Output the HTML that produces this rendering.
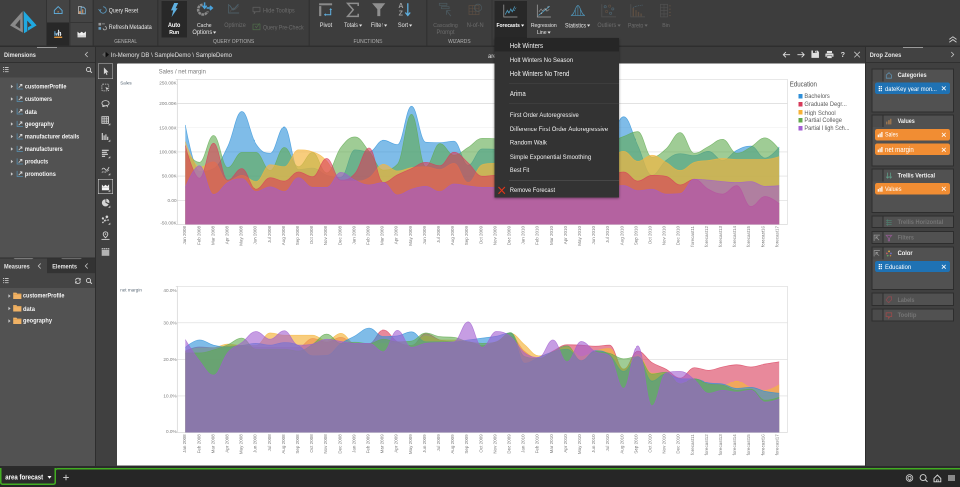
<!DOCTYPE html>
<html><head><meta charset="utf-8"><title>area forecast</title>
<style>
html,body{margin:0;padding:0;background:#3e3e3e;}
body{width:960px;height:487px;overflow:hidden;position:relative;}
#root{will-change:transform;position:absolute;left:0;top:0;width:1920px;height:974px;transform:scale(0.5);transform-origin:0 0;
 font-family:"Liberation Sans",sans-serif;overflow:hidden;background:#3e3e3e;}
#root div,#root svg{position:absolute;box-sizing:border-box;}
#root svg{overflow:visible;}
</style></head>
<body><div id="root">
<div style="left:0px;top:0px;width:1920px;height:91.4px;background:#3d3d3d;"></div>
<div style="left:0px;top:91.4px;width:1920px;height:3px;background:#2e2e2e;"></div>
<div style="left:0px;top:94.4px;width:189.6px;height:30px;background:#424242;"></div>
<div style="left:192.4px;top:94.4px;width:1537.6px;height:31.2px;background:#3c3c3c;"></div>
<div style="left:1732.4px;top:94.4px;width:187.6px;height:30px;background:#424242;"></div>
<div style="left:189.6px;top:91.4px;width:2.8px;height:840.6px;background:#2e2e2e;"></div>
<div style="left:1730px;top:91.4px;width:2.4px;height:840.6px;background:#2e2e2e;"></div>
<div style="left:0px;top:124.4px;width:189.6px;height:2px;background:#303030;"></div>
<div style="left:0px;top:126.4px;width:189.6px;height:28.6px;background:#444444;"></div>
<div style="left:0px;top:155px;width:189.6px;height:359.6px;background:#525252;"></div>
<div style="left:0px;top:514.6px;width:189.6px;height:2.4px;background:#2e2e2e;"></div>
<div style="left:0px;top:517px;width:94.4px;height:30px;background:#444444;"></div>
<div style="left:94.4px;top:517px;width:95.2px;height:29.2px;background:#333333;"></div>
<div style="left:0px;top:547px;width:189.6px;height:29.2px;background:#444444;"></div>
<div style="left:0px;top:576.2px;width:189.6px;height:355.8px;background:#525252;"></div>
<div style="left:192.4px;top:125.6px;width:42px;height:806.4px;background:#404040;"></div>
<div style="left:234.4px;top:126.8px;width:1495.2px;height:804.4px;background:#ffffff;border-radius:2px 0 0 0;"></div>
<div style="left:1732.4px;top:124.4px;width:187.6px;height:807.6px;background:#404040;"></div>
<div style="left:0px;top:932px;width:1920px;height:42px;background:#262626;"></div>
<div style="left:1732.4px;top:124.4px;width:187.6px;height:2px;background:#303030;"></div>
<div style="left:0px;top:0px;width:91.6px;height:91.4px;background:#404040;"></div>
<div style="left:91.6px;top:0px;width:2.4px;height:91.4px;background:#333;"></div>
<div style="left:94px;top:0px;width:44.4px;height:43.6px;background:#444444;"></div>
<div style="left:141px;top:0px;width:44.2px;height:43.6px;background:#444444;"></div>
<div style="left:94px;top:46px;width:44.4px;height:45.4px;background:#282828;"></div>
<div style="left:141px;top:46px;width:44.2px;height:45.4px;background:#444444;"></div>
<div style="left:138.4px;top:0px;width:2.6px;height:91.4px;background:#353535;"></div>
<div style="left:94px;top:43.6px;width:91.2px;height:2.4px;background:#353535;"></div>
<div style="left:185.2px;top:0px;width:2.8px;height:91.4px;background:#333;"></div>
<svg style="left:0px;top:0px;" width="92.00" height="92.00" viewBox="0 0 46 46"><path d="M10 25.4 L22.6 11.2 L22.9 32.6 Z M15.2 25.3 L20.2 28.7 L20.2 19.2 Z" fill="#8a8a8a" fill-rule="evenodd"/><path d="M23.6 10.8 L36.6 25.4 L28 30.6 L28 27.2 L31.6 25.2 L27.2 20.6 L27.4 31.2 L24 33.2 Z" fill="#1fa9e1"/></svg>
<svg style="left:94px;top:0px;" width="44.00" height="44.00" viewBox="0 0 22 22"><path d="M7.3 10.4 L11.2 6.6 L15.1 10.4 L15.1 13.6 L7.3 13.6 Z" fill="none" stroke="#5fb0e0" stroke-width="0.9" stroke-linejoin="round"/><rect x="10.4" y="11" width="1.6" height="1.6" fill="#8c6b4f"/></svg>
<svg style="left:141px;top:0px;" width="44.00" height="44.00" viewBox="0 0 22 22"><path d="M8 6.6 h3.2 v7 h-3.2z" fill="none" stroke="#bdbdbd" stroke-width="0.8"/><path d="M10.6 7.2 h2.6 l1.6 1.6 v5 h-4.2z" fill="#444" stroke="#7fb8dc" stroke-width="0.8"/><rect x="8.4" y="11.2" width="2" height="2.2" fill="#c98b5a"/><rect x="11.6" y="9.4" width="1.2" height="4" fill="#c98b5a"/></svg>
<svg style="left:94px;top:46px;" width="44.00" height="44.00" viewBox="0 0 22 22"><rect x="7.2" y="13.6" width="8" height="1.3" fill="#f0a040"/><rect x="7.4" y="8.2" width="1" height="4.6" fill="#5fb0e0"/><rect x="9.2" y="10" width="1" height="2.8" fill="#5fb0e0"/><rect x="11" y="6.8" width="1.1" height="6" fill="#e8e8e8"/><rect x="12.9" y="9" width="1.1" height="3.8" fill="#e8e8e8"/><path d="M7.6 10.4 L10 11.8 L11.6 8.2 L14.4 11.4" stroke="#bcd" stroke-width="0.6" fill="none"/></svg>
<svg style="left:141px;top:46px;" width="44.00" height="44.00" viewBox="0 0 22 22"><path d="M7 8.6 L9 10.4 L11.2 8.8 L13.2 10.2 L15.4 8.4 L15.4 14.2 L7 14.2 Z" fill="#f2f2f2"/><path d="M7 12 L9 11.4 L11.2 12.2 L13.2 11.4 L15.4 12 L15.4 14.2 L7 14.2Z" fill="#d8d8d8"/></svg>
<div style="left:314.4px;top:0px;width:2.6px;height:91.4px;background:#333;"></div>
<div style="left:51.2px;width:400px;text-align:center;top:77.28px;font-size:9.54px;line-height:11.45px;color:#b2b2b2;font-weight:normal;white-space:nowrap;transform:scaleY(1.14);transform-origin:50% 50%;">GENERAL</div>
<div style="left:617.2px;top:0px;width:2.6px;height:91.4px;background:#333;"></div>
<div style="left:267.1px;width:400px;text-align:center;top:77.04px;font-size:9.93px;line-height:11.92px;color:#b2b2b2;font-weight:normal;white-space:nowrap;transform:scaleY(1.14);transform-origin:50% 50%;">QUERY OPTIONS</div>
<div style="left:852px;top:0px;width:2.6px;height:91.4px;background:#333;"></div>
<div style="left:536px;width:400px;text-align:center;top:77.03px;font-size:9.94px;line-height:11.93px;color:#b2b2b2;font-weight:normal;white-space:nowrap;transform:scaleY(1.14);transform-origin:50% 50%;">FUNCTIONS</div>
<div style="left:982.8px;top:0px;width:2.6px;height:91.4px;background:#333;"></div>
<div style="left:718.7px;width:400px;text-align:center;top:77.14px;font-size:9.76px;line-height:11.71px;color:#b2b2b2;font-weight:normal;white-space:nowrap;transform:scaleY(1.14);transform-origin:50% 50%;">WIZARDS</div>
<svg style="left:196px;top:10.4px;" width="20.00" height="20.00" viewBox="0 0 10 10"><path d="M1.9 5 A3.2 3.2 0 1 0 5.1 1.8" fill="none" stroke="#5fa6d2" stroke-width="0.75"/><path d="M0.6 4.3 L1.9 5.8 L3.2 4.2" fill="none" stroke="#5fa6d2" stroke-width="0.75"/></svg>
<div style="left:217.6px;top:15.51px;font-size:10.48px;line-height:12.57px;color:#e6e6e6;font-weight:normal;white-space:nowrap;transform:scaleY(1.14);transform-origin:50% 50%;">Query Reset</div>
<svg style="left:194.8px;top:42.8px;" width="20.00" height="20.00" viewBox="0 0 10 10"><rect x="1" y="1.4" width="2.6" height="2.6" fill="#9a9a9a"/><rect x="1" y="5.6" width="2.6" height="2.6" fill="#6a9fc2"/><path d="M4.4 2.4 h3" stroke="#9a9a9a" stroke-width="0.8"/><path d="M5.6 6.8 A1.7 1.7 0 1 0 7.4 5" fill="none" stroke="#aaa" stroke-width="0.8"/></svg>
<div style="left:217.6px;top:48.11px;font-size:10.82px;line-height:12.98px;color:#e6e6e6;font-weight:normal;white-space:nowrap;transform:scaleY(1.14);transform-origin:50% 50%;">Refresh Metadata</div>
<div style="left:323px;top:2.4px;width:51.2px;height:73px;background:#282828;"></div>
<svg style="left:338px;top:4px;" width="20.00" height="32.00" viewBox="0 0 10 16"><path d="M5.2 1 L9.2 1 L6.6 6.2 L8.6 6.2 L2.6 15 L4.2 8.4 L2 8.4 Z" fill="#5fb0e0"/></svg>
<div style="left:148.4px;width:400px;text-align:center;top:44.26px;font-size:10.89px;line-height:13.07px;color:#fff;font-weight:bold;white-space:nowrap;transform:scaleY(1.14);transform-origin:50% 50%;">Auto</div>
<div style="left:148.4px;width:400px;text-align:center;top:58.63px;font-size:10.29px;line-height:12.35px;color:#fff;font-weight:bold;white-space:nowrap;transform:scaleY(1.14);transform-origin:50% 50%;">Run</div>
<svg style="left:392px;top:2px;" width="36.00" height="34.00" viewBox="0 0 18 17"><circle cx="7" cy="8.6" r="4.9" fill="none" stroke="#8a8a8a" stroke-width="2.5" stroke-dasharray="2.7 0.65" transform="rotate(-80 7 8.6)"/><path d="M6.6 0 H13 V6.2 H18 V10.4 H10.2 V7.6 H6.6Z" fill="#3d3d3d"/><path d="M8.6 1.4 V6.6 M6.5 4.7 L8.6 7.2 L10.7 4.7" stroke="#4aa3dc" stroke-width="1.5" fill="none"/><path d="M10.6 7 H15.6 M13.9 4.9 L16.3 7 L13.9 9.1" stroke="#4aa3dc" stroke-width="1.5" fill="none"/></svg>
<div style="left:208.6px;width:400px;text-align:center;top:44.74px;font-size:10.1px;line-height:12.12px;color:#e6e6e6;font-weight:normal;white-space:nowrap;transform:scaleY(1.14);transform-origin:50% 50%;">Cache</div>
<div style="left:384.8px;top:57.91px;font-size:11.49px;line-height:13.79px;color:#e6e6e6;font-weight:normal;white-space:nowrap;transform:scaleY(1.14);transform-origin:50% 50%;">Options</div>
<svg style="left:426.4px;top:62.8px;" width="6.40" height="4.60" viewBox="0 0 3.2 2.3"><path d="M0 0 L3.2 0 L1.6 2.3 Z" fill="#e6e6e6"/></svg>
<svg style="left:454px;top:4px;" width="28.00" height="28.00" viewBox="0 0 14 14"><path d="M1.6 2 v9 h10.5" fill="none" stroke="#4c5c64" stroke-width="0.9"/><path d="M2.4 3 L6 8 L11.4 2.2" fill="none" stroke="#4c626e" stroke-width="0.9"/><path d="M3 9.4 L6.4 6 L8 7.6 L11.6 3.6" fill="none" stroke="#5f5f5f" stroke-width="0.8" stroke-dasharray="1 0.6"/></svg>
<div style="left:270px;width:400px;text-align:center;top:44.23px;font-size:10.95px;line-height:13.14px;color:#6c6c6c;font-weight:normal;white-space:nowrap;transform:scaleY(1.14);transform-origin:50% 50%;">Optimize</div>
<svg style="left:504px;top:12.8px;" width="18.00" height="16.00" viewBox="0 0 9 8"><path d="M1 0.8 h7 v4.4 h-4.4 l-1.4 1.6 v-1.6 h-1.2z" fill="none" stroke="#5c5c5c" stroke-width="0.8"/></svg>
<div style="left:526px;top:14.93px;font-size:11.11px;line-height:13.33px;color:#6c6c6c;font-weight:normal;white-space:nowrap;transform:scaleY(1.14);transform-origin:50% 50%;">Hide Tooltips</div>
<svg style="left:504px;top:45.2px;" width="18.00" height="16.00" viewBox="0 0 9 8"><path d="M1 1.6 h7 v5.6 h-7z" fill="none" stroke="#4d6648" stroke-width="0.8"/><path d="M3 3.6 L4.4 5.2 L7.6 0.8" fill="none" stroke="#4d6648" stroke-width="0.8"/></svg>
<div style="left:526px;top:48.28px;font-size:10.54px;line-height:12.64px;color:#6c6c6c;font-weight:normal;white-space:nowrap;transform:scaleY(1.14);transform-origin:50% 50%;">Query Pre-Check</div>
<svg style="left:636.8px;top:4.8px;" width="32.00" height="30.00" viewBox="0 0 16 15"><rect x="0.6" y="0.8" width="13" height="2" fill="#8a8a8a"/><rect x="0.6" y="3.6" width="2.2" height="10" fill="#8a8a8a"/><path d="M6.6 12.2 h5.6 v-5.6" fill="none" stroke="#5fb0e0" stroke-width="1"/><path d="M5.4 12.2 l1.8 -1.4 v2.8z M12.2 5.6 l-1.4 1.8 h2.8z" fill="#5fb0e0"/></svg>
<div style="left:452px;width:400px;text-align:center;top:44.05px;font-size:11.25px;line-height:13.49px;color:#e6e6e6;font-weight:normal;white-space:nowrap;transform:scaleY(1.14);transform-origin:50% 50%;">Pivot</div>
<svg style="left:692px;top:4.4px;" width="28.00" height="32.00" viewBox="0 0 14 16"><path d="M12.2 4 V1.4 H1.6 L7.2 7.8 L1.6 14.4 H12.2 V11.8" fill="none" stroke="#8f8f8f" stroke-width="1.5" stroke-linejoin="miter"/></svg>
<div style="left:688.3px;top:44.51px;font-size:10.49px;line-height:12.59px;color:#e6e6e6;font-weight:normal;white-space:nowrap;transform:scaleY(1.14);transform-origin:50% 50%;">Totals</div>
<svg style="left:717.7px;top:48.8px;" width="6.40" height="4.60" viewBox="0 0 3.2 2.3"><path d="M0 0 L3.2 0 L1.6 2.3 Z" fill="#e6e6e6"/></svg>
<svg style="left:743.2px;top:5.2px;" width="30.00" height="30.00" viewBox="0 0 15 15"><path d="M0.6 0.8 H13.8 L8.8 6.8 V13.6 H5.8 V6.8 Z" fill="#8f8f8f"/></svg>
<div style="left:741.7px;top:44.16px;font-size:11.07px;line-height:13.28px;color:#e6e6e6;font-weight:normal;white-space:nowrap;transform:scaleY(1.14);transform-origin:50% 50%;">Filter</div>
<svg style="left:768.3px;top:48.8px;" width="6.40" height="4.60" viewBox="0 0 3.2 2.3"><path d="M0 0 L3.2 0 L1.6 2.3 Z" fill="#e6e6e6"/></svg>
<svg style="left:796px;top:5.2px;" width="28.00" height="30.00" viewBox="0 0 14 15"><text x="0.4" y="5.6" font-size="7" font-weight="bold" fill="#a0a0a0" font-family="Liberation Sans">A</text><text x="0.6" y="13" font-size="7" font-weight="bold" fill="#a0a0a0" font-family="Liberation Sans">Z</text><path d="M9.8 0.8 V12.6 M7.4 10 L9.8 13 L12.2 10" fill="none" stroke="#5fb0e0" stroke-width="1.3"/></svg>
<div style="left:795.8px;top:44.13px;font-size:11.12px;line-height:13.35px;color:#e6e6e6;font-weight:normal;white-space:nowrap;transform:scaleY(1.14);transform-origin:50% 50%;">Sort</div>
<svg style="left:818.2px;top:48.8px;" width="6.40" height="4.60" viewBox="0 0 3.2 2.3"><path d="M0 0 L3.2 0 L1.6 2.3 Z" fill="#e6e6e6"/></svg>
<svg style="left:876.8px;top:4.8px;" width="30.00" height="30.00" viewBox="0 0 15 15"><rect x="0.8" y="0.8" width="7.6" height="2" fill="none" stroke="#4c5a60" stroke-width="0.7"/><rect x="3" y="4.2" width="7.6" height="2" fill="none" stroke="#4c5a60" stroke-width="0.7"/><path d="M8 8 L12.4 13.6 M8 8 v4.2 M8 8 h4" stroke="#4c5a60" stroke-width="0.8" fill="none"/></svg>
<div style="left:691px;width:400px;text-align:center;top:44.6px;font-size:10.33px;line-height:12.39px;color:#6c6c6c;font-weight:normal;white-space:nowrap;transform:scaleY(1.14);transform-origin:50% 50%;">Cascading</div>
<div style="left:691px;width:400px;text-align:center;top:58.06px;font-size:11.23px;line-height:13.48px;color:#6c6c6c;font-weight:normal;white-space:nowrap;transform:scaleY(1.14);transform-origin:50% 50%;">Prompt</div>
<svg style="left:936px;top:4.8px;" width="30.00" height="30.00" viewBox="0 0 15 15"><rect x="1" y="3" width="10" height="9" fill="none" stroke="#5c4e42" stroke-width="0.7"/><path d="M1 6 h10 M1 9 h10 M4.4 3 v9 M7.8 3 v9" stroke="#5c4e42" stroke-width="0.6"/><circle cx="10" cy="5.2" r="3.6" fill="none" stroke="#4c5a60" stroke-width="0.7"/></svg>
<div style="left:750.4px;width:400px;text-align:center;top:43.87px;font-size:11.55px;line-height:13.86px;color:#6c6c6c;font-weight:normal;white-space:nowrap;transform:scaleY(1.14);transform-origin:50% 50%;">N-of-N</div>
<div style="left:988.8px;top:2.4px;width:65.6px;height:75px;background:#282828;"></div>
<svg style="left:1005.6px;top:7.6px;" width="32.00" height="30.00" viewBox="0 0 16 15"><path d="M0.8 0.6 V13 H14.4" fill="none" stroke="#a8a8a8" stroke-width="0.7"/><path d="M2.2 10.6 L4.4 6.4 L5.8 9.4 L7.8 5 L9.2 7.8 L11.8 2.4" fill="none" stroke="#4f9fc4" stroke-width="0.75"/><path d="M9.2 7.8 L10.4 5.4 L11.4 7 L13.2 3" fill="none" stroke="#4f9fc4" stroke-width="0.6" stroke-dasharray="1 0.7"/></svg>
<div style="left:992.9px;top:44.83px;font-size:9.95px;line-height:11.94px;color:#fff;font-weight:bold;white-space:nowrap;transform:scaleY(1.14);transform-origin:50% 50%;">Forecasts</div>
<svg style="left:1041.9px;top:48.8px;" width="6.40" height="4.60" viewBox="0 0 3.2 2.3"><path d="M0 0 L3.2 0 L1.6 2.3 Z" fill="#fff"/></svg>
<svg style="left:1072.8px;top:7.6px;" width="32.00" height="30.00" viewBox="0 0 16 15"><path d="M0.8 0.6 V13 H14.4" fill="none" stroke="#a8a8a8" stroke-width="0.7"/><path d="M2 11.4 L13.2 2.2" stroke="#4f9fc4" stroke-width="0.8"/><path d="M2.4 7.8 L4.6 5 L6 7 L8.6 4.4 L10.4 7.2 L12.8 5.4" fill="none" stroke="#a0a0a0" stroke-width="0.55"/><circle cx="5" cy="9.2" r="0.6" fill="#c4c4c4"/><circle cx="9.4" cy="5.6" r="0.6" fill="#c4c4c4"/><circle cx="11.6" cy="3" r="0.6" fill="#c4c4c4"/></svg>
<div style="left:887.6px;width:400px;text-align:center;top:44.66px;font-size:10.24px;line-height:12.29px;color:#e6e6e6;font-weight:normal;white-space:nowrap;transform:scaleY(1.14);transform-origin:50% 50%;">Regression</div>
<div style="left:1073.9px;top:58.64px;font-size:10.26px;line-height:12.31px;color:#e6e6e6;font-weight:normal;white-space:nowrap;transform:scaleY(1.14);transform-origin:50% 50%;">Line</div>
<svg style="left:1095.3px;top:62.8px;" width="6.40" height="4.60" viewBox="0 0 3.2 2.3"><path d="M0 0 L3.2 0 L1.6 2.3 Z" fill="#e6e6e6"/></svg>
<svg style="left:1140.8px;top:9.2px;" width="30.00" height="24.00" viewBox="0 0 15 12"><path d="M0.4 11 H14.4" stroke="#4f94b8" stroke-width="0.7"/><path d="M0.6 10.8 C4.2 10.6 4.8 1 7.4 1 C10 1 10.6 10.6 14.2 10.8" fill="none" stroke="#4f94b8" stroke-width="0.7"/><path d="M5 10.8 V5.4 M7.4 10.8 V1.4 M9.8 10.8 V5.4" stroke="#4f94b8" stroke-width="0.55"/></svg>
<div style="left:1130px;top:44.44px;font-size:10.6px;line-height:12.72px;color:#e6e6e6;font-weight:normal;white-space:nowrap;transform:scaleY(1.14);transform-origin:50% 50%;">Statistics</div>
<svg style="left:1174.4px;top:48.8px;" width="6.40" height="4.60" viewBox="0 0 3.2 2.3"><path d="M0 0 L3.2 0 L1.6 2.3 Z" fill="#e6e6e6"/></svg>
<svg style="left:1202px;top:7.2px;" width="32.00" height="30.00" viewBox="0 0 16 15"><path d="M0.8 0.6 V13.4 H15" fill="none" stroke="#525252" stroke-width="0.8"/><circle cx="4.2" cy="3.2" r="1.1" fill="none" stroke="#4c626e" stroke-width="0.7"/><circle cx="8.6" cy="2.6" r="1.1" fill="none" stroke="#5c4e42" stroke-width="0.7"/><circle cx="11.8" cy="5.4" r="1.1" fill="none" stroke="#4c626e" stroke-width="0.7"/><circle cx="5.6" cy="8" r="1.1" fill="none" stroke="#5c4e42" stroke-width="0.7"/><circle cx="9.6" cy="9.8" r="1.1" fill="none" stroke="#4c626e" stroke-width="0.7"/></svg>
<div style="left:1194.7px;top:44.22px;font-size:10.97px;line-height:13.17px;color:#6c6c6c;font-weight:normal;white-space:nowrap;transform:scaleY(1.14);transform-origin:50% 50%;">Outliers</div>
<svg style="left:1234.5px;top:48.8px;" width="6.40" height="4.60" viewBox="0 0 3.2 2.3"><path d="M0 0 L3.2 0 L1.6 2.3 Z" fill="#6c6c6c"/></svg>
<svg style="left:1260px;top:7.2px;" width="32.00" height="30.00" viewBox="0 0 16 15"><path d="M0.8 0.6 V13.4 H15" fill="none" stroke="#525252" stroke-width="0.8"/><rect x="2.6" y="4.4" width="1.4" height="8.4" fill="#5c4e42"/><rect x="5.2" y="6.6" width="1.4" height="6.2" fill="#5c4e42"/><rect x="7.8" y="8.4" width="1.4" height="4.4" fill="#5c4e42"/><rect x="10.4" y="10" width="1.4" height="2.8" fill="#5c4e42"/><path d="M3 4 C6 2.6 9 2 12.6 1.6" stroke="#4c626e" stroke-width="0.7" fill="none" stroke-dasharray="1 0.8"/></svg>
<div style="left:1255.7px;top:44.49px;font-size:10.52px;line-height:12.63px;color:#6c6c6c;font-weight:normal;white-space:nowrap;transform:scaleY(1.14);transform-origin:50% 50%;">Pareto</div>
<svg style="left:1288.7px;top:48.8px;" width="6.40" height="4.60" viewBox="0 0 3.2 2.3"><path d="M0 0 L3.2 0 L1.6 2.3 Z" fill="#6c6c6c"/></svg>
<svg style="left:1319.2px;top:7.2px;" width="28.00" height="30.00" viewBox="0 0 14 15"><rect x="1" y="0.8" width="7" height="12.6" fill="none" stroke="#525252" stroke-width="0.7"/><path d="M1 4 h7 M1 7.2 h7 M1 10.4 h7 M4.5 0.8 v12.6" stroke="#525252" stroke-width="0.6"/><path d="M9.4 2.4 h2 M9.4 5.6 h2 M9.4 8.8 h2 M9.4 12 h2" stroke="#5c4e42" stroke-width="0.8"/></svg>
<div style="left:1132px;width:400px;text-align:center;top:44.57px;font-size:10.38px;line-height:12.45px;color:#6c6c6c;font-weight:normal;white-space:nowrap;transform:scaleY(1.14);transform-origin:50% 50%;">Bin</div>
<svg style="left:1897.2px;top:72px;" width="18.00" height="14.00" viewBox="0 0 9 7"><path d="M0.8 3.4 L4.4 0.8 L8 3.4 M0.8 6.2 L4.4 3.6 L8 6.2" fill="none" stroke="#cfcfcf" stroke-width="0.9"/></svg>
<div style="left:73.6px;top:93.8px;width:40.4px;height:1.8px;background:#9a9a9a;"></div>
<div style="left:1806px;top:93.8px;width:39.6px;height:1.8px;background:#9a9a9a;"></div>
<svg style="left:26.8px;top:516.4px;" width="40.00" height="2.40" viewBox="0 0 20 1.2"><path d="M0 0 H20 L18.6 1.1 H1.4Z" fill="#7a7a7a"/></svg>
<svg style="left:122px;top:516.4px;" width="42.00" height="2.40" viewBox="0 0 21 1.2"><path d="M0 0 H21 L19.6 1.1 H1.4Z" fill="#6a6a6a"/></svg>
<div style="left:8px;top:104.05px;font-size:11.26px;line-height:13.51px;color:#e4e4e4;font-weight:bold;white-space:nowrap;transform:scaleY(1.14);transform-origin:50% 50%;">Dimensions</div>
<svg style="left:168.8px;top:103.2px;" width="8.00" height="12.00" viewBox="0 0 4 6"><path d="M3.2 0.5 L0.8 3 L3.2 5.5" fill="none" stroke="#c8c8c8" stroke-width="0.8"/></svg>
<svg style="left:5.6px;top:134px;" width="12.00" height="10.80" viewBox="0 0 6 5.4"><path d="M0 0.5 h1.2 M2 0.5 h3.6 M0 2.6 h1.2 M2 2.6 h3.6 M0 4.7 h1.2 M2 4.7 h3.6" stroke="#c4c4c4" stroke-width="0.9"/></svg>
<svg style="left:170.8px;top:132.8px;" width="14.00" height="14.00" viewBox="0 0 7 7"><circle cx="3" cy="3" r="2.1" fill="none" stroke="#d8d8d8" stroke-width="0.9"/><path d="M4.6 4.6 L6.4 6.2" stroke="#d8d8d8" stroke-width="1"/></svg>
<svg style="left:20.8px;top:169px;" width="6.00" height="8.00" viewBox="0 0 3 4"><path d="M0.4 0.2 L2.6 2 L0.4 3.8Z" fill="#c8c8c8"/></svg>
<svg style="left:33.2px;top:165.8px;" width="14.00" height="14.00" viewBox="0 0 7 7"><path d="M0.6 0.4 V6 H6.4" fill="none" stroke="#5892b4" stroke-width="0.75"/><path d="M2.2 4.6 L5.2 1.6 M3.4 1.4 H5.4 V3.4" fill="none" stroke="#e0e0e0" stroke-width="0.8"/></svg>
<div style="left:49.8px;top:166.64px;font-size:10.93px;line-height:13.11px;color:#f4f4f4;font-weight:bold;white-space:nowrap;transform:scaleY(1.14);transform-origin:50% 50%;">customerProfile</div>
<svg style="left:20.8px;top:194.04px;" width="6.00" height="8.00" viewBox="0 0 3 4"><path d="M0.4 0.2 L2.6 2 L0.4 3.8Z" fill="#c8c8c8"/></svg>
<svg style="left:33.2px;top:190.84px;" width="14.00" height="14.00" viewBox="0 0 7 7"><path d="M0.6 0.4 V6 H6.4" fill="none" stroke="#5892b4" stroke-width="0.75"/><path d="M2.2 4.6 L5.2 1.6 M3.4 1.4 H5.4 V3.4" fill="none" stroke="#e0e0e0" stroke-width="0.8"/></svg>
<div style="left:49.8px;top:191.81px;font-size:10.72px;line-height:12.86px;color:#f4f4f4;font-weight:bold;white-space:nowrap;transform:scaleY(1.14);transform-origin:50% 50%;">customers</div>
<svg style="left:20.8px;top:219.08px;" width="6.00" height="8.00" viewBox="0 0 3 4"><path d="M0.4 0.2 L2.6 2 L0.4 3.8Z" fill="#c8c8c8"/></svg>
<svg style="left:33.2px;top:215.88px;" width="14.00" height="14.00" viewBox="0 0 7 7"><path d="M0.6 0.4 V6 H6.4" fill="none" stroke="#5892b4" stroke-width="0.75"/><path d="M2.2 4.6 L5.2 1.6 M3.4 1.4 H5.4 V3.4" fill="none" stroke="#e0e0e0" stroke-width="0.8"/></svg>
<div style="left:49.8px;top:216.28px;font-size:11.67px;line-height:14.01px;color:#f4f4f4;font-weight:bold;white-space:nowrap;transform:scaleY(1.14);transform-origin:50% 50%;">data</div>
<svg style="left:20.8px;top:244.12px;" width="6.00" height="8.00" viewBox="0 0 3 4"><path d="M0.4 0.2 L2.6 2 L0.4 3.8Z" fill="#c8c8c8"/></svg>
<svg style="left:33.2px;top:240.92px;" width="14.00" height="14.00" viewBox="0 0 7 7"><path d="M0.6 0.4 V6 H6.4" fill="none" stroke="#5892b4" stroke-width="0.75"/><path d="M2.2 4.6 L5.2 1.6 M3.4 1.4 H5.4 V3.4" fill="none" stroke="#e0e0e0" stroke-width="0.8"/></svg>
<div style="left:49.8px;top:241.51px;font-size:11.35px;line-height:13.62px;color:#f4f4f4;font-weight:bold;white-space:nowrap;transform:scaleY(1.14);transform-origin:50% 50%;">geography</div>
<svg style="left:20.8px;top:269.16px;" width="6.00" height="8.00" viewBox="0 0 3 4"><path d="M0.4 0.2 L2.6 2 L0.4 3.8Z" fill="#c8c8c8"/></svg>
<svg style="left:33.2px;top:265.96px;" width="14.00" height="14.00" viewBox="0 0 7 7"><path d="M0.6 0.4 V6 H6.4" fill="none" stroke="#5892b4" stroke-width="0.75"/><path d="M2.2 4.6 L5.2 1.6 M3.4 1.4 H5.4 V3.4" fill="none" stroke="#e0e0e0" stroke-width="0.8"/></svg>
<div style="left:49.8px;top:266.72px;font-size:11.06px;line-height:13.27px;color:#f4f4f4;font-weight:bold;white-space:nowrap;transform:scaleY(1.14);transform-origin:50% 50%;">manufacturer details</div>
<svg style="left:20.8px;top:294.2px;" width="6.00" height="8.00" viewBox="0 0 3 4"><path d="M0.4 0.2 L2.6 2 L0.4 3.8Z" fill="#c8c8c8"/></svg>
<svg style="left:33.2px;top:291px;" width="14.00" height="14.00" viewBox="0 0 7 7"><path d="M0.6 0.4 V6 H6.4" fill="none" stroke="#5892b4" stroke-width="0.75"/><path d="M2.2 4.6 L5.2 1.6 M3.4 1.4 H5.4 V3.4" fill="none" stroke="#e0e0e0" stroke-width="0.8"/></svg>
<div style="left:49.8px;top:291.87px;font-size:10.88px;line-height:13.06px;color:#f4f4f4;font-weight:bold;white-space:nowrap;transform:scaleY(1.14);transform-origin:50% 50%;">manufacturers</div>
<svg style="left:20.8px;top:319.24px;" width="6.00" height="8.00" viewBox="0 0 3 4"><path d="M0.4 0.2 L2.6 2 L0.4 3.8Z" fill="#c8c8c8"/></svg>
<svg style="left:33.2px;top:316.04px;" width="14.00" height="14.00" viewBox="0 0 7 7"><path d="M0.6 0.4 V6 H6.4" fill="none" stroke="#5892b4" stroke-width="0.75"/><path d="M2.2 4.6 L5.2 1.6 M3.4 1.4 H5.4 V3.4" fill="none" stroke="#e0e0e0" stroke-width="0.8"/></svg>
<div style="left:49.8px;top:316.9px;font-size:10.89px;line-height:13.07px;color:#f4f4f4;font-weight:bold;white-space:nowrap;transform:scaleY(1.14);transform-origin:50% 50%;">products</div>
<svg style="left:20.8px;top:344.28px;" width="6.00" height="8.00" viewBox="0 0 3 4"><path d="M0.4 0.2 L2.6 2 L0.4 3.8Z" fill="#c8c8c8"/></svg>
<svg style="left:33.2px;top:341.08px;" width="14.00" height="14.00" viewBox="0 0 7 7"><path d="M0.6 0.4 V6 H6.4" fill="none" stroke="#5892b4" stroke-width="0.75"/><path d="M2.2 4.6 L5.2 1.6 M3.4 1.4 H5.4 V3.4" fill="none" stroke="#e0e0e0" stroke-width="0.8"/></svg>
<div style="left:49.8px;top:341.72px;font-size:11.27px;line-height:13.53px;color:#f4f4f4;font-weight:bold;white-space:nowrap;transform:scaleY(1.14);transform-origin:50% 50%;">promotions</div>
<div style="left:8px;top:526.69px;font-size:11.18px;line-height:13.42px;color:#e4e4e4;font-weight:bold;white-space:nowrap;transform:scaleY(1.14);transform-origin:50% 50%;">Measures</div>
<svg style="left:74.6px;top:526.4px;" width="8.00" height="12.00" viewBox="0 0 4 6"><path d="M3.2 0.5 L0.8 3 L3.2 5.5" fill="none" stroke="#c8c8c8" stroke-width="0.8"/></svg>
<div style="left:104.4px;top:526.71px;font-size:11.16px;line-height:13.39px;color:#e4e4e4;font-weight:bold;white-space:nowrap;transform:scaleY(1.14);transform-origin:50% 50%;">Elements</div>
<svg style="left:168.8px;top:526.4px;" width="8.00" height="12.00" viewBox="0 0 4 6"><path d="M3.2 0.5 L0.8 3 L3.2 5.5" fill="none" stroke="#c8c8c8" stroke-width="0.8"/></svg>
<svg style="left:5.6px;top:556.2px;" width="12.00" height="10.80" viewBox="0 0 6 5.4"><path d="M0 0.5 h1.2 M2 0.5 h3.6 M0 2.6 h1.2 M2 2.6 h3.6 M0 4.7 h1.2 M2 4.7 h3.6" stroke="#c4c4c4" stroke-width="0.9"/></svg>
<svg style="left:170.8px;top:555px;" width="14.00" height="14.00" viewBox="0 0 7 7"><circle cx="3" cy="3" r="2.1" fill="none" stroke="#d8d8d8" stroke-width="0.9"/><path d="M4.6 4.6 L6.4 6.2" stroke="#d8d8d8" stroke-width="1"/></svg>
<svg style="left:149.2px;top:555.2px;" width="14.00" height="14.00" viewBox="0 0 7 7"><path d="M1 3 A2.4 2.4 0 0 1 5.6 2.2 M5.8 3.8 A2.4 2.4 0 0 1 1.2 4.6" fill="none" stroke="#d0d0d0" stroke-width="0.85"/><path d="M5.9 0.8 V2.6 H4.2 M0.9 6 V4.2 H2.6" fill="none" stroke="#d0d0d0" stroke-width="0.7"/></svg>
<svg style="left:16px;top:587.6px;" width="6.00" height="8.00" viewBox="0 0 3 4"><path d="M0.4 0.2 L2.6 2 L0.4 3.8Z" fill="#c8c8c8"/></svg>
<svg style="left:26.4px;top:584px;" width="18.00" height="14.80" viewBox="0 0 9 7.4"><path d="M0.2 0.6 H3.4 L4.2 1.6 H8.4 V7 H0.2Z" fill="#f0b265"/><path d="M0.2 2.4 H8.4" stroke="#e09a45" stroke-width="0.5"/></svg>
<div style="left:46px;top:585.27px;font-size:10.88px;line-height:13.05px;color:#f4f4f4;font-weight:bold;white-space:nowrap;transform:scaleY(1.14);transform-origin:50% 50%;">customerProfile</div>
<svg style="left:16px;top:612.6px;" width="6.00" height="8.00" viewBox="0 0 3 4"><path d="M0.4 0.2 L2.6 2 L0.4 3.8Z" fill="#c8c8c8"/></svg>
<svg style="left:26.4px;top:609px;" width="18.00" height="14.80" viewBox="0 0 9 7.4"><path d="M0.2 0.6 H3.4 L4.2 1.6 H8.4 V7 H0.2Z" fill="#f0b265"/><path d="M0.2 2.4 H8.4" stroke="#e09a45" stroke-width="0.5"/></svg>
<div style="left:46px;top:609.8px;font-size:11.67px;line-height:14.01px;color:#f4f4f4;font-weight:bold;white-space:nowrap;transform:scaleY(1.14);transform-origin:50% 50%;">data</div>
<svg style="left:16px;top:637.6px;" width="6.00" height="8.00" viewBox="0 0 3 4"><path d="M0.4 0.2 L2.6 2 L0.4 3.8Z" fill="#c8c8c8"/></svg>
<svg style="left:26.4px;top:634px;" width="18.00" height="14.80" viewBox="0 0 9 7.4"><path d="M0.2 0.6 H3.4 L4.2 1.6 H8.4 V7 H0.2Z" fill="#f0b265"/><path d="M0.2 2.4 H8.4" stroke="#e09a45" stroke-width="0.5"/></svg>
<div style="left:46px;top:634.99px;font-size:11.35px;line-height:13.62px;color:#f4f4f4;font-weight:bold;white-space:nowrap;transform:scaleY(1.14);transform-origin:50% 50%;">geography</div>
<svg style="left:203.6px;top:102.8px;" width="14.40" height="12.40" viewBox="0 0 7.2 6.2"><path d="M0.2 3.1 L3.3 0.2 L3.3 6Z" fill="#5e5e5e"/><path d="M3.6 0.2 L7 3.1 L3.6 6Z" fill="#0c0c0c"/></svg>
<div style="left:221.6px;top:101.8px;font-size:11.99px;line-height:14.39px;color:#e2e2e2;font-weight:normal;white-space:nowrap;transform:scaleY(1.14);transform-origin:50% 50%;">In-Memory DB \ SampleDemo \ SampleDemo</div>
<div style="left:976px;top:103.61px;font-size:11.65px;line-height:13.98px;color:#e2e2e2;font-weight:normal;white-space:nowrap;transform:scaleY(1.14);transform-origin:50% 50%;">area forecast</div>
<svg style="left:1565.2px;top:102.8px;" width="16.00" height="12.80" viewBox="0 0 8 6.4"><path d="M7.6 3.2 H0.8 M3.4 0.6 L0.8 3.2 L3.4 5.8" fill="none" stroke="#dedede" stroke-width="0.9"/></svg>
<svg style="left:1593.6px;top:102.8px;" width="16.00" height="12.80" viewBox="0 0 8 6.4"><path d="M0.4 3.2 H7.2 M4.6 0.6 L7.2 3.2 L4.6 5.8" fill="none" stroke="#dedede" stroke-width="0.9"/></svg>
<svg style="left:1621.8px;top:100.4px;" width="17.20" height="16.80" viewBox="0 0 8 7.6"><path d="M0.4 0.4 H6 L7.4 1.8 V7.2 H0.4Z" fill="#dedede"/><rect x="1.8" y="0.4" width="3.4" height="2.2" fill="#3c3c3c"/><rect x="3.9" y="0.7" width="0.9" height="1.5" fill="#dedede"/></svg>
<svg style="left:1649.6px;top:100.8px;" width="17.80" height="16.40" viewBox="0 0 8.4 7.6"><rect x="1.8" y="0.4" width="4.8" height="2" fill="#dedede"/><rect x="0.4" y="2.8" width="7.6" height="3.2" rx="0.5" fill="#dedede"/><rect x="1.8" y="4.8" width="4.8" height="2.6" fill="#dedede" stroke="#3c3c3c" stroke-width="0.5"/></svg>
<div style="left:1485.6px;width:400px;text-align:center;top:100.56px;font-size:14.4px;line-height:17.28px;color:#dedede;font-weight:bold;white-space:nowrap;">?</div>
<svg style="left:1706.8px;top:102px;" width="14.40" height="14.40" viewBox="0 0 7.2 7.2"><path d="M0.8 0.8 L6.4 6.4 M6.4 0.8 L0.8 6.4" stroke="#c8c8c8" stroke-width="0.8"/></svg>
<div style="left:196.4px;top:126.8px;width:29.6px;height:30.8px;border:1.4px solid #bdbdbd;"></div>
<svg style="left:201.2px;top:131.8px;" width="20.00" height="20.00" viewBox="0 0 10 10"><path d="M3.4 1.4 L3.4 8.2 L5 6.8 L6 9 L7 8.6 L6 6.4 L8 6.2Z" fill="#d6d6d6"/></svg>
<svg style="left:201.2px;top:164.8px;" width="20.00" height="20.00" viewBox="0 0 10 10"><rect x="1.4" y="1.6" width="6.8" height="6.8" rx="1" fill="none" stroke="#d6d6d6" stroke-width="0.8" stroke-dasharray="1.2 1"/><path d="M4.6 4.4 L9.2 5.8 L7.2 6.6 L6.6 8.8Z" fill="#d6d6d6" stroke="#404040" stroke-width="0.4"/></svg>
<svg style="left:201.2px;top:198.4px;" width="20.00" height="20.00" viewBox="0 0 10 10"><ellipse cx="5" cy="4.2" rx="3.6" ry="2.6" fill="none" stroke="#d6d6d6" stroke-width="0.8"/><path d="M2.6 6.2 C1.6 7.2 2 8 3.4 7.4 L5 6.8 M6 6 L7.2 8.2" fill="none" stroke="#d6d6d6" stroke-width="0.8"/></svg>
<svg style="left:201.2px;top:231.2px;" width="20.00" height="20.00" viewBox="0 0 10 10"><rect x="1.4" y="1.2" width="6.6" height="6.6" fill="none" stroke="#d6d6d6" stroke-width="0.9"/><path d="M1.4 3.4 h6.6 M1.4 5.6 h6.6 M3.6 1.2 v6.6 M5.8 1.2 v6.6" stroke="#d6d6d6" stroke-width="0.7"/><path d="M9.8 7.6 V9.8 H7.6Z" fill="#c4c4c4"/></svg>
<svg style="left:201.2px;top:264px;" width="20.00" height="20.00" viewBox="0 0 10 10"><path d="M1.8 1 V8 M3.6 3.4 V8 M5.4 2.4 V8 M7.2 4.8 V8" stroke="#d6d6d6" stroke-width="1.1"/><path d="M9.8 7.6 V9.8 H7.6Z" fill="#c4c4c4"/></svg>
<svg style="left:201.2px;top:297.2px;" width="20.00" height="20.00" viewBox="0 0 10 10"><path d="M1.4 1.8 H8.2 M1.4 3.8 H6.4 M1.4 5.8 H7.4 M1.4 7.8 H4.6" stroke="#d6d6d6" stroke-width="1.1"/><path d="M9.8 7.6 V9.8 H7.6Z" fill="#c4c4c4"/></svg>
<svg style="left:201.2px;top:331.2px;" width="20.00" height="20.00" viewBox="0 0 10 10"><path d="M1.4 4 C2.6 2 3.6 2.4 4.8 4 C6 5.6 7 4.6 8.6 1.6" fill="none" stroke="#d6d6d6" stroke-width="0.8"/><path d="M1.4 7 C2.8 5 4 7.6 5.4 6.4 C6.6 5.4 7.4 5.6 8.4 4.4" fill="none" stroke="#d6d6d6" stroke-width="0.8" stroke-dasharray="1.2 0.6"/><path d="M9.8 7.6 V9.8 H7.6Z" fill="#c4c4c4"/></svg>
<div style="left:196.4px;top:358.4px;width:29.6px;height:29.6px;border:1.4px solid #e0e0e0;"></div>
<svg style="left:201.2px;top:363.6px;" width="20.00" height="20.00" viewBox="0 0 10 10"><path d="M1.4 2.6 L3.2 4.4 L5 2.8 L6.8 4.2 L8.6 2.4 V8.2 H1.4Z" fill="#f4f4f4"/><path d="M1.4 5.6 L3.2 5 L5 5.8 L6.8 5 L8.6 5.6" stroke="#c4c4c4" stroke-width="0.7" fill="none"/><path d="M9.8 7.6 V9.8 H7.6Z" fill="#c4c4c4"/></svg>
<svg style="left:201.2px;top:396px;" width="20.00" height="20.00" viewBox="0 0 10 10"><path d="M5 4.8 L5 1.2 A3.6 3.6 0 1 0 8.2 6.4Z" fill="#d6d6d6"/><path d="M5.8 4 V0.8 A3.4 3.4 0 0 1 8.8 5.2Z" fill="#d6d6d6"/><path d="M9.8 7.6 V9.8 H7.6Z" fill="#c4c4c4"/></svg>
<svg style="left:201.2px;top:430.4px;" width="20.00" height="20.00" viewBox="0 0 10 10"><path d="M2.4 3.4 L4.4 5.6 L6.4 1.8 M4.4 5.6 L7.6 5 M2.4 7.4 L4.4 5.6" stroke="#a8a8a8" stroke-width="0.5" fill="none"/><circle cx="2.4" cy="3.4" r="1.1" fill="#d6d6d6"/><circle cx="6.4" cy="1.8" r="1.3" fill="#d6d6d6"/><circle cx="4.4" cy="5.6" r="0.9" fill="#d6d6d6"/><circle cx="7.6" cy="5" r="0.8" fill="#d6d6d6"/><circle cx="2.4" cy="7.4" r="0.8" fill="#d6d6d6"/><path d="M9.8 7.6 V9.8 H7.6Z" fill="#c4c4c4"/></svg>
<svg style="left:201.2px;top:461.6px;" width="20.00" height="20.00" viewBox="0 0 10 10"><path d="M5 0.8 A2.3 2.3 0 0 1 7.3 3.1 C7.3 4.6 5 6.8 5 6.8 C5 6.8 2.7 4.6 2.7 3.1 A2.3 2.3 0 0 1 5 0.8Z" fill="none" stroke="#d6d6d6" stroke-width="0.9"/><circle cx="5" cy="3.1" r="0.7" fill="#d6d6d6"/><path d="M1 8.4 H9" stroke="#d6d6d6" stroke-width="0.9"/></svg>
<svg style="left:201.2px;top:494px;" width="20.00" height="20.00" viewBox="0 0 10 10"><rect x="1.2" y="1" width="7.6" height="7.8" fill="#b4b4b4"/><path d="M1.2 2.6 h7.6 M3.1 1 v1.6 M5 1 v1.6 M6.9 1 v1.6" stroke="#404040" stroke-width="0.5"/></svg>
<div style="left:317.4px;top:134.57px;font-size:11.71px;line-height:14.05px;color:#7a7a7a;font-weight:normal;white-space:nowrap;transform:scaleY(1.14);transform-origin:50% 50%;">Sales / net margin</div>
<div style="left:240.4px;top:161.28px;font-size:9.2px;line-height:11.04px;color:#5d6b78;font-weight:normal;white-space:nowrap;">Sales</div>
<div style="left:240.4px;top:574.88px;font-size:9.2px;line-height:11.04px;color:#5d6b78;font-weight:normal;white-space:nowrap;">net margin</div>
<svg style="left:0;top:0;font-family:'Liberation Sans',sans-serif;" width="1920" height="974" viewBox="0 0 1920 974"><line x1="354.60" y1="158.60" x2="1575.00" y2="158.60" stroke="#d9d9d9" stroke-width="1.3"/><line x1="354.60" y1="207.00" x2="1575.00" y2="207.00" stroke="#d9d9d9" stroke-width="1.3"/><line x1="354.60" y1="255.40" x2="1575.00" y2="255.40" stroke="#d9d9d9" stroke-width="1.3"/><line x1="354.60" y1="303.80" x2="1575.00" y2="303.80" stroke="#d9d9d9" stroke-width="1.3"/><line x1="354.60" y1="352.20" x2="1575.00" y2="352.20" stroke="#d9d9d9" stroke-width="1.3"/><line x1="354.60" y1="400.60" x2="1575.00" y2="400.60" stroke="#d9d9d9" stroke-width="1.3"/><line x1="354.60" y1="449.00" x2="1575.00" y2="449.00" stroke="#d9d9d9" stroke-width="1.3"/><line x1="354.60" y1="158.60" x2="354.60" y2="449.00" stroke="#d0d0d0" stroke-width="1.4"/><line x1="1575.00" y1="158.60" x2="1575.00" y2="449.00" stroke="#d9d9d9" stroke-width="1.3"/><line x1="354.60" y1="572.60" x2="1575.00" y2="572.60" stroke="#d9d9d9" stroke-width="1.3"/><line x1="354.60" y1="645.70" x2="1575.00" y2="645.70" stroke="#d9d9d9" stroke-width="1.3"/><line x1="354.60" y1="718.80" x2="1575.00" y2="718.80" stroke="#d9d9d9" stroke-width="1.3"/><line x1="354.60" y1="791.90" x2="1575.00" y2="791.90" stroke="#d9d9d9" stroke-width="1.3"/><line x1="354.60" y1="865.00" x2="1575.00" y2="865.00" stroke="#d9d9d9" stroke-width="1.3"/><line x1="354.60" y1="572.60" x2="354.60" y2="865.00" stroke="#d0d0d0" stroke-width="1.4"/><line x1="1575.00" y1="572.60" x2="1575.00" y2="865.00" stroke="#d9d9d9" stroke-width="1.3"/><text x="353.20" y="169.00" text-anchor="end" font-size="9.3" fill="#7a7a7a">250.00K</text><line x1="351.60" y1="158.60" x2="354.60" y2="158.60" stroke="#d0d0d0" stroke-width="1.2"/><text x="353.20" y="210.20" text-anchor="end" font-size="9.3" fill="#7a7a7a">200.00K</text><line x1="351.60" y1="207.00" x2="354.60" y2="207.00" stroke="#d0d0d0" stroke-width="1.2"/><text x="353.20" y="258.60" text-anchor="end" font-size="9.3" fill="#7a7a7a">150.00K</text><line x1="351.60" y1="255.40" x2="354.60" y2="255.40" stroke="#d0d0d0" stroke-width="1.2"/><text x="353.20" y="307.00" text-anchor="end" font-size="9.3" fill="#7a7a7a">100.00K</text><line x1="351.60" y1="303.80" x2="354.60" y2="303.80" stroke="#d0d0d0" stroke-width="1.2"/><text x="353.20" y="355.40" text-anchor="end" font-size="9.3" fill="#7a7a7a">50.00K</text><line x1="351.60" y1="352.20" x2="354.60" y2="352.20" stroke="#d0d0d0" stroke-width="1.2"/><text x="353.20" y="403.80" text-anchor="end" font-size="9.3" fill="#7a7a7a">0.00</text><line x1="351.60" y1="400.60" x2="354.60" y2="400.60" stroke="#d0d0d0" stroke-width="1.2"/><text x="353.20" y="449.40" text-anchor="end" font-size="9.3" fill="#7a7a7a">-50.00K</text><line x1="351.60" y1="449.00" x2="354.60" y2="449.00" stroke="#d0d0d0" stroke-width="1.2"/><text x="353.20" y="583.60" text-anchor="end" font-size="9.3" fill="#7a7a7a">40.0%</text><line x1="351.60" y1="572.60" x2="354.60" y2="572.60" stroke="#d0d0d0" stroke-width="1.2"/><text x="353.20" y="648.90" text-anchor="end" font-size="9.3" fill="#7a7a7a">30.0%</text><line x1="351.60" y1="645.70" x2="354.60" y2="645.70" stroke="#d0d0d0" stroke-width="1.2"/><text x="353.20" y="722.00" text-anchor="end" font-size="9.3" fill="#7a7a7a">20.0%</text><line x1="351.60" y1="718.80" x2="354.60" y2="718.80" stroke="#d0d0d0" stroke-width="1.2"/><text x="353.20" y="795.10" text-anchor="end" font-size="9.3" fill="#7a7a7a">10.0%</text><line x1="351.60" y1="791.90" x2="354.60" y2="791.90" stroke="#d0d0d0" stroke-width="1.2"/><text x="353.20" y="865.80" text-anchor="end" font-size="9.3" fill="#7a7a7a">0.0%</text><line x1="351.60" y1="865.00" x2="354.60" y2="865.00" stroke="#d0d0d0" stroke-width="1.2"/><text transform="translate(372.40 452.00) rotate(-90)" text-anchor="end" font-size="9" fill="#7c7c7c">Jan 2008</text><text transform="translate(372.40 868.60) rotate(-90)" text-anchor="end" font-size="9" fill="#7c7c7c">Jan 2008</text><text transform="translate(400.60 452.00) rotate(-90)" text-anchor="end" font-size="9" fill="#7c7c7c">Feb 2008</text><text transform="translate(400.60 868.60) rotate(-90)" text-anchor="end" font-size="9" fill="#7c7c7c">Feb 2008</text><text transform="translate(428.80 452.00) rotate(-90)" text-anchor="end" font-size="9" fill="#7c7c7c">Mar 2008</text><text transform="translate(428.80 868.60) rotate(-90)" text-anchor="end" font-size="9" fill="#7c7c7c">Mar 2008</text><text transform="translate(457.00 452.00) rotate(-90)" text-anchor="end" font-size="9" fill="#7c7c7c">Apr 2008</text><text transform="translate(457.00 868.60) rotate(-90)" text-anchor="end" font-size="9" fill="#7c7c7c">Apr 2008</text><text transform="translate(485.20 452.00) rotate(-90)" text-anchor="end" font-size="9" fill="#7c7c7c">May 2008</text><text transform="translate(485.20 868.60) rotate(-90)" text-anchor="end" font-size="9" fill="#7c7c7c">May 2008</text><text transform="translate(513.40 452.00) rotate(-90)" text-anchor="end" font-size="9" fill="#7c7c7c">Jun 2008</text><text transform="translate(513.40 868.60) rotate(-90)" text-anchor="end" font-size="9" fill="#7c7c7c">Jun 2008</text><text transform="translate(541.60 452.00) rotate(-90)" text-anchor="end" font-size="9" fill="#7c7c7c">Jul 2008</text><text transform="translate(541.60 868.60) rotate(-90)" text-anchor="end" font-size="9" fill="#7c7c7c">Jul 2008</text><text transform="translate(569.80 452.00) rotate(-90)" text-anchor="end" font-size="9" fill="#7c7c7c">Aug 2008</text><text transform="translate(569.80 868.60) rotate(-90)" text-anchor="end" font-size="9" fill="#7c7c7c">Aug 2008</text><text transform="translate(598.00 452.00) rotate(-90)" text-anchor="end" font-size="9" fill="#7c7c7c">Sep 2008</text><text transform="translate(598.00 868.60) rotate(-90)" text-anchor="end" font-size="9" fill="#7c7c7c">Sep 2008</text><text transform="translate(626.20 452.00) rotate(-90)" text-anchor="end" font-size="9" fill="#7c7c7c">Oct 2008</text><text transform="translate(626.20 868.60) rotate(-90)" text-anchor="end" font-size="9" fill="#7c7c7c">Oct 2008</text><text transform="translate(654.40 452.00) rotate(-90)" text-anchor="end" font-size="9" fill="#7c7c7c">Nov 2008</text><text transform="translate(654.40 868.60) rotate(-90)" text-anchor="end" font-size="9" fill="#7c7c7c">Nov 2008</text><text transform="translate(682.60 452.00) rotate(-90)" text-anchor="end" font-size="9" fill="#7c7c7c">Dec 2008</text><text transform="translate(682.60 868.60) rotate(-90)" text-anchor="end" font-size="9" fill="#7c7c7c">Dec 2008</text><text transform="translate(710.80 452.00) rotate(-90)" text-anchor="end" font-size="9" fill="#7c7c7c">Jan 2009</text><text transform="translate(710.80 868.60) rotate(-90)" text-anchor="end" font-size="9" fill="#7c7c7c">Jan 2009</text><text transform="translate(739.00 452.00) rotate(-90)" text-anchor="end" font-size="9" fill="#7c7c7c">Feb 2009</text><text transform="translate(739.00 868.60) rotate(-90)" text-anchor="end" font-size="9" fill="#7c7c7c">Feb 2009</text><text transform="translate(767.20 452.00) rotate(-90)" text-anchor="end" font-size="9" fill="#7c7c7c">Mar 2009</text><text transform="translate(767.20 868.60) rotate(-90)" text-anchor="end" font-size="9" fill="#7c7c7c">Mar 2009</text><text transform="translate(795.40 452.00) rotate(-90)" text-anchor="end" font-size="9" fill="#7c7c7c">Apr 2009</text><text transform="translate(795.40 868.60) rotate(-90)" text-anchor="end" font-size="9" fill="#7c7c7c">Apr 2009</text><text transform="translate(823.60 452.00) rotate(-90)" text-anchor="end" font-size="9" fill="#7c7c7c">May 2009</text><text transform="translate(823.60 868.60) rotate(-90)" text-anchor="end" font-size="9" fill="#7c7c7c">May 2009</text><text transform="translate(851.80 452.00) rotate(-90)" text-anchor="end" font-size="9" fill="#7c7c7c">Jun 2009</text><text transform="translate(851.80 868.60) rotate(-90)" text-anchor="end" font-size="9" fill="#7c7c7c">Jun 2009</text><text transform="translate(880.00 452.00) rotate(-90)" text-anchor="end" font-size="9" fill="#7c7c7c">Jul 2009</text><text transform="translate(880.00 868.60) rotate(-90)" text-anchor="end" font-size="9" fill="#7c7c7c">Jul 2009</text><text transform="translate(908.20 452.00) rotate(-90)" text-anchor="end" font-size="9" fill="#7c7c7c">Aug 2009</text><text transform="translate(908.20 868.60) rotate(-90)" text-anchor="end" font-size="9" fill="#7c7c7c">Aug 2009</text><text transform="translate(936.40 452.00) rotate(-90)" text-anchor="end" font-size="9" fill="#7c7c7c">Sep 2009</text><text transform="translate(936.40 868.60) rotate(-90)" text-anchor="end" font-size="9" fill="#7c7c7c">Sep 2009</text><text transform="translate(964.60 452.00) rotate(-90)" text-anchor="end" font-size="9" fill="#7c7c7c">Oct 2009</text><text transform="translate(964.60 868.60) rotate(-90)" text-anchor="end" font-size="9" fill="#7c7c7c">Oct 2009</text><text transform="translate(992.80 452.00) rotate(-90)" text-anchor="end" font-size="9" fill="#7c7c7c">Nov 2009</text><text transform="translate(992.80 868.60) rotate(-90)" text-anchor="end" font-size="9" fill="#7c7c7c">Nov 2009</text><text transform="translate(1021.00 452.00) rotate(-90)" text-anchor="end" font-size="9" fill="#7c7c7c">Dec 2009</text><text transform="translate(1021.00 868.60) rotate(-90)" text-anchor="end" font-size="9" fill="#7c7c7c">Dec 2009</text><text transform="translate(1049.20 452.00) rotate(-90)" text-anchor="end" font-size="9" fill="#7c7c7c">Jan 2010</text><text transform="translate(1049.20 868.60) rotate(-90)" text-anchor="end" font-size="9" fill="#7c7c7c">Jan 2010</text><text transform="translate(1077.40 452.00) rotate(-90)" text-anchor="end" font-size="9" fill="#7c7c7c">Feb 2010</text><text transform="translate(1077.40 868.60) rotate(-90)" text-anchor="end" font-size="9" fill="#7c7c7c">Feb 2010</text><text transform="translate(1105.60 452.00) rotate(-90)" text-anchor="end" font-size="9" fill="#7c7c7c">Mar 2010</text><text transform="translate(1105.60 868.60) rotate(-90)" text-anchor="end" font-size="9" fill="#7c7c7c">Mar 2010</text><text transform="translate(1133.80 452.00) rotate(-90)" text-anchor="end" font-size="9" fill="#7c7c7c">Apr 2010</text><text transform="translate(1133.80 868.60) rotate(-90)" text-anchor="end" font-size="9" fill="#7c7c7c">Apr 2010</text><text transform="translate(1162.00 452.00) rotate(-90)" text-anchor="end" font-size="9" fill="#7c7c7c">May 2010</text><text transform="translate(1162.00 868.60) rotate(-90)" text-anchor="end" font-size="9" fill="#7c7c7c">May 2010</text><text transform="translate(1190.20 452.00) rotate(-90)" text-anchor="end" font-size="9" fill="#7c7c7c">Jun 2010</text><text transform="translate(1190.20 868.60) rotate(-90)" text-anchor="end" font-size="9" fill="#7c7c7c">Jun 2010</text><text transform="translate(1218.40 452.00) rotate(-90)" text-anchor="end" font-size="9" fill="#7c7c7c">Jul 2010</text><text transform="translate(1218.40 868.60) rotate(-90)" text-anchor="end" font-size="9" fill="#7c7c7c">Jul 2010</text><text transform="translate(1246.60 452.00) rotate(-90)" text-anchor="end" font-size="9" fill="#7c7c7c">Aug 2010</text><text transform="translate(1246.60 868.60) rotate(-90)" text-anchor="end" font-size="9" fill="#7c7c7c">Aug 2010</text><text transform="translate(1274.80 452.00) rotate(-90)" text-anchor="end" font-size="9" fill="#7c7c7c">Sep 2010</text><text transform="translate(1274.80 868.60) rotate(-90)" text-anchor="end" font-size="9" fill="#7c7c7c">Sep 2010</text><text transform="translate(1303.00 452.00) rotate(-90)" text-anchor="end" font-size="9" fill="#7c7c7c">Oct 2010</text><text transform="translate(1303.00 868.60) rotate(-90)" text-anchor="end" font-size="9" fill="#7c7c7c">Oct 2010</text><text transform="translate(1331.20 452.00) rotate(-90)" text-anchor="end" font-size="9" fill="#7c7c7c">Nov 2010</text><text transform="translate(1331.20 868.60) rotate(-90)" text-anchor="end" font-size="9" fill="#7c7c7c">Nov 2010</text><text transform="translate(1359.40 452.00) rotate(-90)" text-anchor="end" font-size="9" fill="#7c7c7c">Dec 2010</text><text transform="translate(1359.40 868.60) rotate(-90)" text-anchor="end" font-size="9" fill="#7c7c7c">Dec 2010</text><text transform="translate(1387.60 452.00) rotate(-90)" text-anchor="end" font-size="9" fill="#7c7c7c">forecast11</text><text transform="translate(1387.60 868.60) rotate(-90)" text-anchor="end" font-size="9" fill="#7c7c7c">forecast11</text><text transform="translate(1415.80 452.00) rotate(-90)" text-anchor="end" font-size="9" fill="#7c7c7c">forecast12</text><text transform="translate(1415.80 868.60) rotate(-90)" text-anchor="end" font-size="9" fill="#7c7c7c">forecast12</text><text transform="translate(1444.00 452.00) rotate(-90)" text-anchor="end" font-size="9" fill="#7c7c7c">forecast13</text><text transform="translate(1444.00 868.60) rotate(-90)" text-anchor="end" font-size="9" fill="#7c7c7c">forecast13</text><text transform="translate(1472.20 452.00) rotate(-90)" text-anchor="end" font-size="9" fill="#7c7c7c">forecast14</text><text transform="translate(1472.20 868.60) rotate(-90)" text-anchor="end" font-size="9" fill="#7c7c7c">forecast14</text><text transform="translate(1500.40 452.00) rotate(-90)" text-anchor="end" font-size="9" fill="#7c7c7c">forecast15</text><text transform="translate(1500.40 868.60) rotate(-90)" text-anchor="end" font-size="9" fill="#7c7c7c">forecast15</text><text transform="translate(1528.60 452.00) rotate(-90)" text-anchor="end" font-size="9" fill="#7c7c7c">forecast16</text><text transform="translate(1528.60 868.60) rotate(-90)" text-anchor="end" font-size="9" fill="#7c7c7c">forecast16</text><text transform="translate(1556.80 452.00) rotate(-90)" text-anchor="end" font-size="9" fill="#7c7c7c">forecast17</text><text transform="translate(1556.80 868.60) rotate(-90)" text-anchor="end" font-size="9" fill="#7c7c7c">forecast17</text><g><path d="M370.60 449.00L370.60 249.80C370.60 249.80 387.57 342.92 398.88 342.92C410.19 342.92 415.85 342.92 427.16 337.16C438.47 331.40 444.13 315.85 455.44 293.00C466.75 270.15 472.41 222.92 483.72 222.92C495.03 222.92 500.69 271.50 512.00 288.20C523.31 304.90 528.97 306.44 540.28 306.44C551.59 306.44 557.25 253.64 568.56 253.64C579.87 253.64 585.53 339.08 596.84 339.08C608.15 339.08 613.81 336.20 625.12 336.20C636.43 336.20 642.09 346.95 653.40 350.60C664.71 354.25 670.37 354.44 681.68 354.44C692.99 354.44 698.65 299.72 709.96 299.72C721.27 299.72 726.93 303.56 738.24 303.56C749.55 303.56 755.21 280.52 766.52 280.52C777.83 280.52 783.49 289.16 794.80 289.16C806.11 289.16 811.77 212.36 823.08 212.36C834.39 212.36 840.05 283.40 851.36 284.36C862.67 285.32 868.33 285.32 879.64 285.32C890.95 285.32 896.61 282.44 907.92 282.44C919.23 282.44 924.89 330.44 936.20 330.44C947.51 330.44 953.17 297.80 964.48 297.80C975.79 297.80 981.45 297.80 992.76 298.76C1004.07 299.72 1009.73 302.60 1021.04 302.60C1032.35 302.60 1038.01 293.00 1049.32 293.00C1060.63 293.00 1066.29 297.80 1077.60 297.80C1088.91 297.80 1094.57 288.20 1105.88 288.20C1117.19 288.20 1122.85 302.60 1134.16 302.60C1145.47 302.60 1151.13 293.00 1162.44 293.00C1173.75 293.00 1179.41 297.80 1190.72 297.80C1202.03 297.80 1207.69 296.26 1219.00 283.40C1230.31 270.54 1235.97 233.48 1247.28 233.48C1258.59 233.48 1264.25 267.66 1275.56 291.08C1286.87 314.50 1292.53 350.60 1303.84 350.60C1315.15 350.60 1320.81 329.48 1332.12 320.84C1343.43 312.20 1349.09 307.40 1360.40 307.40C1371.71 307.40 1377.37 311.24 1388.68 311.24C1399.99 311.24 1405.65 302.60 1416.96 302.60C1428.27 302.60 1433.93 320.84 1445.24 320.84C1456.55 320.84 1462.21 306.44 1473.52 300.68C1484.83 294.92 1490.49 292.04 1501.80 292.04C1513.11 292.04 1518.77 316.04 1530.08 316.04C1541.39 316.04 1558.36 293.96 1558.36 293.96L1558.36 449.00 Z" fill="#2a8fd9" fill-opacity="0.6"/>
<path d="M370.60 249.80C370.60 249.80 387.57 342.92 398.88 342.92C410.19 342.92 415.85 342.92 427.16 337.16C438.47 331.40 444.13 315.85 455.44 293.00C466.75 270.15 472.41 222.92 483.72 222.92C495.03 222.92 500.69 271.50 512.00 288.20C523.31 304.90 528.97 306.44 540.28 306.44C551.59 306.44 557.25 253.64 568.56 253.64C579.87 253.64 585.53 339.08 596.84 339.08C608.15 339.08 613.81 336.20 625.12 336.20C636.43 336.20 642.09 346.95 653.40 350.60C664.71 354.25 670.37 354.44 681.68 354.44C692.99 354.44 698.65 299.72 709.96 299.72C721.27 299.72 726.93 303.56 738.24 303.56C749.55 303.56 755.21 280.52 766.52 280.52C777.83 280.52 783.49 289.16 794.80 289.16C806.11 289.16 811.77 212.36 823.08 212.36C834.39 212.36 840.05 283.40 851.36 284.36C862.67 285.32 868.33 285.32 879.64 285.32C890.95 285.32 896.61 282.44 907.92 282.44C919.23 282.44 924.89 330.44 936.20 330.44C947.51 330.44 953.17 297.80 964.48 297.80C975.79 297.80 981.45 297.80 992.76 298.76C1004.07 299.72 1009.73 302.60 1021.04 302.60C1032.35 302.60 1038.01 293.00 1049.32 293.00C1060.63 293.00 1066.29 297.80 1077.60 297.80C1088.91 297.80 1094.57 288.20 1105.88 288.20C1117.19 288.20 1122.85 302.60 1134.16 302.60C1145.47 302.60 1151.13 293.00 1162.44 293.00C1173.75 293.00 1179.41 297.80 1190.72 297.80C1202.03 297.80 1207.69 296.26 1219.00 283.40C1230.31 270.54 1235.97 233.48 1247.28 233.48C1258.59 233.48 1264.25 267.66 1275.56 291.08C1286.87 314.50 1292.53 350.60 1303.84 350.60C1315.15 350.60 1320.81 329.48 1332.12 320.84C1343.43 312.20 1349.09 307.40 1360.40 307.40C1371.71 307.40 1377.37 311.24 1388.68 311.24C1399.99 311.24 1405.65 302.60 1416.96 302.60C1428.27 302.60 1433.93 320.84 1445.24 320.84C1456.55 320.84 1462.21 306.44 1473.52 300.68C1484.83 294.92 1490.49 292.04 1501.80 292.04C1513.11 292.04 1518.77 316.04 1530.08 316.04C1541.39 316.04 1558.36 293.96 1558.36 293.96" fill="none" stroke="#2a8fd9" stroke-opacity="0.7" stroke-width="1.3"/>
<path d="M370.60 449.00L370.60 302.60C370.60 302.60 387.57 324.68 398.88 324.68C410.19 324.68 415.85 270.92 427.16 270.92C438.47 270.92 444.13 335.24 455.44 335.24C466.75 335.24 472.41 305.00 483.72 305.00C495.03 305.00 500.69 305.00 512.00 305.00C523.31 305.00 528.97 341.00 540.28 341.00C551.59 341.00 557.25 294.92 568.56 294.92C579.87 294.92 585.53 333.32 596.84 333.32C608.15 333.32 613.81 305.00 625.12 305.00C636.43 305.00 642.09 345.80 653.40 345.80C664.71 345.80 670.37 309.32 681.68 294.92C692.99 280.52 698.65 273.80 709.96 273.80C721.27 273.80 726.93 289.35 738.24 302.60C749.55 315.85 755.21 340.04 766.52 340.04C777.83 340.04 783.49 340.04 794.80 328.52C806.11 317.00 811.77 228.68 823.08 228.68C834.39 228.68 840.05 333.32 851.36 333.32C862.67 333.32 868.33 287.24 879.64 287.24C890.95 287.24 896.61 310.28 907.92 310.28C919.23 310.28 924.89 301.64 936.20 294.92C947.51 288.20 953.17 276.68 964.48 276.68C975.79 276.68 981.45 276.68 992.76 277.64C1004.07 278.60 1009.73 281.29 1021.04 283.40C1032.35 285.51 1038.01 288.20 1049.32 288.20C1060.63 288.20 1066.29 283.40 1077.60 283.40C1088.91 283.40 1094.57 293.00 1105.88 293.00C1117.19 293.00 1122.85 278.60 1134.16 278.60C1145.47 278.60 1151.13 288.20 1162.44 288.20C1173.75 288.20 1179.41 286.28 1190.72 285.32C1202.03 284.36 1207.69 285.32 1219.00 283.40C1230.31 281.48 1235.97 276.87 1247.28 272.84C1258.59 268.81 1264.25 263.24 1275.56 263.24C1286.87 263.24 1292.53 314.12 1303.84 314.12C1315.15 314.12 1320.81 307.59 1332.12 297.80C1343.43 288.01 1349.09 265.16 1360.40 265.16C1371.71 265.16 1377.37 306.44 1388.68 306.44C1399.99 306.44 1405.65 298.57 1416.96 293.00C1428.27 287.43 1433.93 278.60 1445.24 278.60C1456.55 278.60 1462.21 306.44 1473.52 306.44C1484.83 306.44 1490.49 300.10 1501.80 293.96C1513.11 287.82 1518.77 275.72 1530.08 275.72C1541.39 275.72 1558.36 298.76 1558.36 298.76L1558.36 449.00 Z" fill="#5faa4f" fill-opacity="0.6"/>
<path d="M370.60 302.60C370.60 302.60 387.57 324.68 398.88 324.68C410.19 324.68 415.85 270.92 427.16 270.92C438.47 270.92 444.13 335.24 455.44 335.24C466.75 335.24 472.41 305.00 483.72 305.00C495.03 305.00 500.69 305.00 512.00 305.00C523.31 305.00 528.97 341.00 540.28 341.00C551.59 341.00 557.25 294.92 568.56 294.92C579.87 294.92 585.53 333.32 596.84 333.32C608.15 333.32 613.81 305.00 625.12 305.00C636.43 305.00 642.09 345.80 653.40 345.80C664.71 345.80 670.37 309.32 681.68 294.92C692.99 280.52 698.65 273.80 709.96 273.80C721.27 273.80 726.93 289.35 738.24 302.60C749.55 315.85 755.21 340.04 766.52 340.04C777.83 340.04 783.49 340.04 794.80 328.52C806.11 317.00 811.77 228.68 823.08 228.68C834.39 228.68 840.05 333.32 851.36 333.32C862.67 333.32 868.33 287.24 879.64 287.24C890.95 287.24 896.61 310.28 907.92 310.28C919.23 310.28 924.89 301.64 936.20 294.92C947.51 288.20 953.17 276.68 964.48 276.68C975.79 276.68 981.45 276.68 992.76 277.64C1004.07 278.60 1009.73 281.29 1021.04 283.40C1032.35 285.51 1038.01 288.20 1049.32 288.20C1060.63 288.20 1066.29 283.40 1077.60 283.40C1088.91 283.40 1094.57 293.00 1105.88 293.00C1117.19 293.00 1122.85 278.60 1134.16 278.60C1145.47 278.60 1151.13 288.20 1162.44 288.20C1173.75 288.20 1179.41 286.28 1190.72 285.32C1202.03 284.36 1207.69 285.32 1219.00 283.40C1230.31 281.48 1235.97 276.87 1247.28 272.84C1258.59 268.81 1264.25 263.24 1275.56 263.24C1286.87 263.24 1292.53 314.12 1303.84 314.12C1315.15 314.12 1320.81 307.59 1332.12 297.80C1343.43 288.01 1349.09 265.16 1360.40 265.16C1371.71 265.16 1377.37 306.44 1388.68 306.44C1399.99 306.44 1405.65 298.57 1416.96 293.00C1428.27 287.43 1433.93 278.60 1445.24 278.60C1456.55 278.60 1462.21 306.44 1473.52 306.44C1484.83 306.44 1490.49 300.10 1501.80 293.96C1513.11 287.82 1518.77 275.72 1530.08 275.72C1541.39 275.72 1558.36 298.76 1558.36 298.76" fill="none" stroke="#5faa4f" stroke-opacity="0.7" stroke-width="1.3"/>
<path d="M370.60 449.00L370.60 283.40C370.60 283.40 387.57 334.28 398.88 334.28C410.19 334.28 415.85 323.72 427.16 323.72C438.47 323.72 444.13 362.12 455.44 362.12C466.75 362.12 472.41 350.60 483.72 350.60C495.03 350.60 500.69 363.08 512.00 363.08C523.31 363.08 528.97 329.48 540.28 329.48C551.59 329.48 557.25 333.32 568.56 333.32C579.87 333.32 585.53 299.72 596.84 299.72C608.15 299.72 613.81 299.72 625.12 303.56C636.43 307.40 642.09 310.09 653.40 321.80C664.71 333.51 670.37 362.12 681.68 362.12C692.99 362.12 698.65 362.12 709.96 362.12C721.27 362.12 726.93 362.12 738.24 355.40C749.55 348.68 755.21 328.52 766.52 328.52C777.83 328.52 783.49 341.96 794.80 341.96C806.11 341.96 811.77 336.97 823.08 335.24C834.39 333.51 840.05 333.32 851.36 333.32C862.67 333.32 868.33 339.08 879.64 339.08C890.95 339.08 896.61 326.60 907.92 326.60C919.23 326.60 924.89 365.00 936.20 365.00C947.51 365.00 953.17 333.32 964.48 329.48C975.79 325.64 981.45 328.14 992.76 325.64C1004.07 323.14 1009.73 317.00 1021.04 317.00C1032.35 317.00 1038.01 317.00 1049.32 317.00C1060.63 317.00 1066.29 321.80 1077.60 321.80C1088.91 321.80 1094.57 318.92 1105.88 317.00C1117.19 315.08 1122.85 312.20 1134.16 312.20C1145.47 312.20 1151.13 317.00 1162.44 317.00C1173.75 317.00 1179.41 315.08 1190.72 314.12C1202.03 313.16 1207.69 314.12 1219.00 312.20C1230.31 310.28 1235.97 302.60 1247.28 302.60C1258.59 302.60 1264.25 322.76 1275.56 322.76C1286.87 322.76 1292.53 310.28 1303.84 310.28C1315.15 310.28 1320.81 318.54 1332.12 324.68C1343.43 330.82 1349.09 341.00 1360.40 341.00C1371.71 341.00 1377.37 328.52 1388.68 324.68C1399.99 320.84 1405.65 322.38 1416.96 320.84C1428.27 319.30 1433.93 317.00 1445.24 317.00C1456.55 317.00 1462.21 318.92 1473.52 318.92C1484.83 318.92 1490.49 318.92 1501.80 318.92C1513.11 318.92 1518.77 318.92 1530.08 318.92C1541.39 318.92 1558.36 313.16 1558.36 313.16L1558.36 449.00 Z" fill="#f5b63f" fill-opacity="0.68"/>
<path d="M370.60 283.40C370.60 283.40 387.57 334.28 398.88 334.28C410.19 334.28 415.85 323.72 427.16 323.72C438.47 323.72 444.13 362.12 455.44 362.12C466.75 362.12 472.41 350.60 483.72 350.60C495.03 350.60 500.69 363.08 512.00 363.08C523.31 363.08 528.97 329.48 540.28 329.48C551.59 329.48 557.25 333.32 568.56 333.32C579.87 333.32 585.53 299.72 596.84 299.72C608.15 299.72 613.81 299.72 625.12 303.56C636.43 307.40 642.09 310.09 653.40 321.80C664.71 333.51 670.37 362.12 681.68 362.12C692.99 362.12 698.65 362.12 709.96 362.12C721.27 362.12 726.93 362.12 738.24 355.40C749.55 348.68 755.21 328.52 766.52 328.52C777.83 328.52 783.49 341.96 794.80 341.96C806.11 341.96 811.77 336.97 823.08 335.24C834.39 333.51 840.05 333.32 851.36 333.32C862.67 333.32 868.33 339.08 879.64 339.08C890.95 339.08 896.61 326.60 907.92 326.60C919.23 326.60 924.89 365.00 936.20 365.00C947.51 365.00 953.17 333.32 964.48 329.48C975.79 325.64 981.45 328.14 992.76 325.64C1004.07 323.14 1009.73 317.00 1021.04 317.00C1032.35 317.00 1038.01 317.00 1049.32 317.00C1060.63 317.00 1066.29 321.80 1077.60 321.80C1088.91 321.80 1094.57 318.92 1105.88 317.00C1117.19 315.08 1122.85 312.20 1134.16 312.20C1145.47 312.20 1151.13 317.00 1162.44 317.00C1173.75 317.00 1179.41 315.08 1190.72 314.12C1202.03 313.16 1207.69 314.12 1219.00 312.20C1230.31 310.28 1235.97 302.60 1247.28 302.60C1258.59 302.60 1264.25 322.76 1275.56 322.76C1286.87 322.76 1292.53 310.28 1303.84 310.28C1315.15 310.28 1320.81 318.54 1332.12 324.68C1343.43 330.82 1349.09 341.00 1360.40 341.00C1371.71 341.00 1377.37 328.52 1388.68 324.68C1399.99 320.84 1405.65 322.38 1416.96 320.84C1428.27 319.30 1433.93 317.00 1445.24 317.00C1456.55 317.00 1462.21 318.92 1473.52 318.92C1484.83 318.92 1490.49 318.92 1501.80 318.92C1513.11 318.92 1518.77 318.92 1530.08 318.92C1541.39 318.92 1558.36 313.16 1558.36 313.16" fill="none" stroke="#f5b63f" stroke-opacity="0.7" stroke-width="1.3"/>
<path d="M370.60 449.00L370.60 291.08C370.60 291.08 387.57 356.36 398.88 356.36C410.19 356.36 415.85 286.28 427.16 286.28C438.47 286.28 444.13 360.20 455.44 360.20C466.75 360.20 472.41 337.16 483.72 337.16C495.03 337.16 500.69 378.44 512.00 378.44C523.31 378.44 528.97 355.40 540.28 355.40C551.59 355.40 557.25 362.12 568.56 362.12C579.87 362.12 585.53 343.88 596.84 343.88C608.15 343.88 613.81 353.48 625.12 353.48C636.43 353.48 642.09 317.00 653.40 317.00C664.71 317.00 670.37 360.20 681.68 360.20C692.99 360.20 698.65 359.62 709.96 346.76C721.27 333.90 726.93 295.88 738.24 295.88C749.55 295.88 755.21 365.00 766.52 365.00C777.83 365.00 783.49 355.21 794.80 349.64C806.11 344.07 811.77 342.15 823.08 337.16C834.39 332.17 840.05 324.68 851.36 324.68C862.67 324.68 868.33 331.40 879.64 331.40C890.95 331.40 896.61 304.52 907.92 304.52C919.23 304.52 924.89 316.04 936.20 325.64C947.51 335.24 953.17 352.52 964.48 352.52C975.79 352.52 981.45 350.60 992.76 350.60C1004.07 350.60 1009.73 355.40 1021.04 355.40C1032.35 355.40 1038.01 350.60 1049.32 350.60C1060.63 350.60 1066.29 355.40 1077.60 355.40C1088.91 355.40 1094.57 350.60 1105.88 350.60C1117.19 350.60 1122.85 355.40 1134.16 355.40C1145.47 355.40 1151.13 350.60 1162.44 350.60C1173.75 350.60 1179.41 352.52 1190.72 352.52C1202.03 352.52 1207.69 352.33 1219.00 350.60C1230.31 348.87 1235.97 343.88 1247.28 343.88C1258.59 343.88 1264.25 362.12 1275.56 362.12C1286.87 362.12 1292.53 350.60 1303.84 350.60C1315.15 350.60 1320.81 350.60 1332.12 352.52C1343.43 354.44 1349.09 369.80 1360.40 369.80C1371.71 369.80 1377.37 358.28 1388.68 358.28C1399.99 358.28 1405.65 372.49 1416.96 378.44C1428.27 384.39 1433.93 388.04 1445.24 388.04C1456.55 388.04 1462.21 371.24 1473.52 371.24C1484.83 371.24 1490.49 413.00 1501.80 413.00C1513.11 413.00 1518.77 392.84 1530.08 392.84C1541.39 392.84 1558.36 407.24 1558.36 407.24L1558.36 449.00 Z" fill="#d93a58" fill-opacity="0.6"/>
<path d="M370.60 291.08C370.60 291.08 387.57 356.36 398.88 356.36C410.19 356.36 415.85 286.28 427.16 286.28C438.47 286.28 444.13 360.20 455.44 360.20C466.75 360.20 472.41 337.16 483.72 337.16C495.03 337.16 500.69 378.44 512.00 378.44C523.31 378.44 528.97 355.40 540.28 355.40C551.59 355.40 557.25 362.12 568.56 362.12C579.87 362.12 585.53 343.88 596.84 343.88C608.15 343.88 613.81 353.48 625.12 353.48C636.43 353.48 642.09 317.00 653.40 317.00C664.71 317.00 670.37 360.20 681.68 360.20C692.99 360.20 698.65 359.62 709.96 346.76C721.27 333.90 726.93 295.88 738.24 295.88C749.55 295.88 755.21 365.00 766.52 365.00C777.83 365.00 783.49 355.21 794.80 349.64C806.11 344.07 811.77 342.15 823.08 337.16C834.39 332.17 840.05 324.68 851.36 324.68C862.67 324.68 868.33 331.40 879.64 331.40C890.95 331.40 896.61 304.52 907.92 304.52C919.23 304.52 924.89 316.04 936.20 325.64C947.51 335.24 953.17 352.52 964.48 352.52C975.79 352.52 981.45 350.60 992.76 350.60C1004.07 350.60 1009.73 355.40 1021.04 355.40C1032.35 355.40 1038.01 350.60 1049.32 350.60C1060.63 350.60 1066.29 355.40 1077.60 355.40C1088.91 355.40 1094.57 350.60 1105.88 350.60C1117.19 350.60 1122.85 355.40 1134.16 355.40C1145.47 355.40 1151.13 350.60 1162.44 350.60C1173.75 350.60 1179.41 352.52 1190.72 352.52C1202.03 352.52 1207.69 352.33 1219.00 350.60C1230.31 348.87 1235.97 343.88 1247.28 343.88C1258.59 343.88 1264.25 362.12 1275.56 362.12C1286.87 362.12 1292.53 350.60 1303.84 350.60C1315.15 350.60 1320.81 350.60 1332.12 352.52C1343.43 354.44 1349.09 369.80 1360.40 369.80C1371.71 369.80 1377.37 358.28 1388.68 358.28C1399.99 358.28 1405.65 372.49 1416.96 378.44C1428.27 384.39 1433.93 388.04 1445.24 388.04C1456.55 388.04 1462.21 371.24 1473.52 371.24C1484.83 371.24 1490.49 413.00 1501.80 413.00C1513.11 413.00 1518.77 392.84 1530.08 392.84C1541.39 392.84 1558.36 407.24 1558.36 407.24" fill="none" stroke="#d93a58" stroke-opacity="0.7" stroke-width="1.3"/>
<path d="M370.60 449.00L370.60 374.60C370.60 374.60 387.57 331.40 398.88 331.40C410.19 331.40 415.85 389.00 427.16 389.00C438.47 389.00 444.13 371.34 455.44 365.00C466.75 358.66 472.41 357.32 483.72 357.32C495.03 357.32 500.69 383.24 512.00 383.24C523.31 383.24 528.97 373.64 540.28 373.64C551.59 373.64 557.25 383.24 568.56 383.24C579.87 383.24 585.53 355.40 596.84 355.40C608.15 355.40 613.81 374.60 625.12 374.60C636.43 374.60 642.09 374.60 653.40 374.60C664.71 374.60 670.37 344.84 681.68 344.84C692.99 344.84 698.65 355.21 709.96 360.20C721.27 365.19 726.93 369.80 738.24 369.80C749.55 369.80 755.21 365.00 766.52 365.00C777.83 365.00 783.49 389.96 794.80 389.96C806.11 389.96 811.77 381.90 823.08 378.44C834.39 374.98 840.05 372.68 851.36 372.68C862.67 372.68 868.33 383.24 879.64 383.24C890.95 383.24 896.61 367.88 907.92 367.88C919.23 367.88 924.89 370.38 936.20 371.72C947.51 373.06 953.17 374.60 964.48 374.60C975.79 374.60 981.45 374.60 992.76 374.60C1004.07 374.60 1009.73 371.72 1021.04 371.72C1032.35 371.72 1038.01 371.72 1049.32 371.72C1060.63 371.72 1066.29 373.64 1077.60 373.64C1088.91 373.64 1094.57 371.72 1105.88 371.72C1117.19 371.72 1122.85 373.64 1134.16 373.64C1145.47 373.64 1151.13 371.72 1162.44 371.72C1173.75 371.72 1179.41 372.68 1190.72 372.68C1202.03 372.68 1207.69 372.01 1219.00 371.72C1230.31 371.43 1235.97 371.24 1247.28 371.24C1258.59 371.24 1264.25 381.32 1275.56 381.32C1286.87 381.32 1292.53 378.44 1303.84 378.44C1315.15 378.44 1320.81 388.04 1332.12 388.04C1343.43 388.04 1349.09 388.04 1360.40 387.08C1371.71 386.12 1377.37 358.28 1388.68 358.28C1399.99 358.28 1405.65 359.24 1416.96 360.20C1428.27 361.16 1433.93 362.12 1445.24 363.08C1456.55 364.04 1462.21 365.00 1473.52 365.00C1484.83 365.00 1490.49 363.08 1501.80 363.08C1513.11 363.08 1518.77 372.68 1530.08 372.68C1541.39 372.68 1558.36 371.24 1558.36 371.24L1558.36 449.00 Z" fill="#a05cd0" fill-opacity="0.6"/>
<path d="M370.60 374.60C370.60 374.60 387.57 331.40 398.88 331.40C410.19 331.40 415.85 389.00 427.16 389.00C438.47 389.00 444.13 371.34 455.44 365.00C466.75 358.66 472.41 357.32 483.72 357.32C495.03 357.32 500.69 383.24 512.00 383.24C523.31 383.24 528.97 373.64 540.28 373.64C551.59 373.64 557.25 383.24 568.56 383.24C579.87 383.24 585.53 355.40 596.84 355.40C608.15 355.40 613.81 374.60 625.12 374.60C636.43 374.60 642.09 374.60 653.40 374.60C664.71 374.60 670.37 344.84 681.68 344.84C692.99 344.84 698.65 355.21 709.96 360.20C721.27 365.19 726.93 369.80 738.24 369.80C749.55 369.80 755.21 365.00 766.52 365.00C777.83 365.00 783.49 389.96 794.80 389.96C806.11 389.96 811.77 381.90 823.08 378.44C834.39 374.98 840.05 372.68 851.36 372.68C862.67 372.68 868.33 383.24 879.64 383.24C890.95 383.24 896.61 367.88 907.92 367.88C919.23 367.88 924.89 370.38 936.20 371.72C947.51 373.06 953.17 374.60 964.48 374.60C975.79 374.60 981.45 374.60 992.76 374.60C1004.07 374.60 1009.73 371.72 1021.04 371.72C1032.35 371.72 1038.01 371.72 1049.32 371.72C1060.63 371.72 1066.29 373.64 1077.60 373.64C1088.91 373.64 1094.57 371.72 1105.88 371.72C1117.19 371.72 1122.85 373.64 1134.16 373.64C1145.47 373.64 1151.13 371.72 1162.44 371.72C1173.75 371.72 1179.41 372.68 1190.72 372.68C1202.03 372.68 1207.69 372.01 1219.00 371.72C1230.31 371.43 1235.97 371.24 1247.28 371.24C1258.59 371.24 1264.25 381.32 1275.56 381.32C1286.87 381.32 1292.53 378.44 1303.84 378.44C1315.15 378.44 1320.81 388.04 1332.12 388.04C1343.43 388.04 1349.09 388.04 1360.40 387.08C1371.71 386.12 1377.37 358.28 1388.68 358.28C1399.99 358.28 1405.65 359.24 1416.96 360.20C1428.27 361.16 1433.93 362.12 1445.24 363.08C1456.55 364.04 1462.21 365.00 1473.52 365.00C1484.83 365.00 1490.49 363.08 1501.80 363.08C1513.11 363.08 1518.77 372.68 1530.08 372.68C1541.39 372.68 1558.36 371.24 1558.36 371.24" fill="none" stroke="#a05cd0" stroke-opacity="0.7" stroke-width="1.3"/>
</g><g><path d="M370.60 865.00L370.60 702.10C370.60 702.10 387.57 693.96 398.88 693.96C410.19 693.96 415.85 695.44 427.16 695.44C438.47 695.44 444.13 693.37 455.44 692.48C466.75 691.59 472.41 691.00 483.72 691.00C495.03 691.00 500.69 694.70 512.00 694.70C523.31 694.70 528.97 694.70 540.28 694.70C551.59 694.70 557.25 694.70 568.56 694.70C579.87 694.70 585.53 694.70 596.84 694.70C608.15 694.70 613.81 676.94 625.12 676.94C636.43 676.94 642.09 684.34 653.40 684.34C664.71 684.34 670.37 674.72 681.68 674.72C692.99 674.72 698.65 687.30 709.96 687.30C721.27 687.30 726.93 687.30 738.24 687.30C749.55 687.30 755.21 659.92 766.52 659.92C777.83 659.92 783.49 677.38 794.80 683.60C806.11 689.82 811.77 691.00 823.08 691.00C834.39 691.00 840.05 667.32 851.36 667.32C862.67 667.32 868.33 676.64 879.64 679.90C890.95 683.16 896.61 683.60 907.92 683.60C919.23 683.60 924.89 683.60 936.20 683.60C947.51 683.60 953.17 691.00 964.48 691.00C975.79 691.00 981.45 687.30 992.76 683.60C1004.07 679.90 1009.73 672.50 1021.04 672.50C1032.35 672.50 1038.01 693.96 1049.32 702.84C1060.63 711.72 1066.29 716.90 1077.60 716.90C1088.91 716.90 1094.57 707.58 1105.88 702.10C1117.19 696.62 1122.85 689.52 1134.16 689.52C1145.47 689.52 1151.13 689.67 1162.44 690.26C1173.75 690.85 1179.41 692.48 1190.72 692.48C1202.03 692.48 1207.69 690.26 1219.00 690.26C1230.31 690.26 1235.97 739.10 1247.28 739.10C1258.59 739.10 1264.25 702.10 1275.56 702.10C1286.87 702.10 1292.53 717.79 1303.84 725.04C1315.15 732.29 1320.81 732.14 1332.12 738.36C1343.43 744.58 1349.09 756.12 1360.40 756.12C1371.71 756.12 1377.37 735.40 1388.68 735.40C1399.99 735.40 1405.65 740.58 1416.96 740.58C1428.27 740.58 1433.93 736.14 1445.24 733.92C1456.55 731.70 1462.21 729.48 1473.52 729.48C1484.83 729.48 1490.49 733.92 1501.80 733.92C1513.11 733.92 1518.77 730.07 1530.08 728.00C1541.39 725.93 1558.36 723.56 1558.36 723.56L1558.36 865.00 Z" fill="#d93a58" fill-opacity="0.6"/>
<path d="M370.60 702.10C370.60 702.10 387.57 693.96 398.88 693.96C410.19 693.96 415.85 695.44 427.16 695.44C438.47 695.44 444.13 693.37 455.44 692.48C466.75 691.59 472.41 691.00 483.72 691.00C495.03 691.00 500.69 694.70 512.00 694.70C523.31 694.70 528.97 694.70 540.28 694.70C551.59 694.70 557.25 694.70 568.56 694.70C579.87 694.70 585.53 694.70 596.84 694.70C608.15 694.70 613.81 676.94 625.12 676.94C636.43 676.94 642.09 684.34 653.40 684.34C664.71 684.34 670.37 674.72 681.68 674.72C692.99 674.72 698.65 687.30 709.96 687.30C721.27 687.30 726.93 687.30 738.24 687.30C749.55 687.30 755.21 659.92 766.52 659.92C777.83 659.92 783.49 677.38 794.80 683.60C806.11 689.82 811.77 691.00 823.08 691.00C834.39 691.00 840.05 667.32 851.36 667.32C862.67 667.32 868.33 676.64 879.64 679.90C890.95 683.16 896.61 683.60 907.92 683.60C919.23 683.60 924.89 683.60 936.20 683.60C947.51 683.60 953.17 691.00 964.48 691.00C975.79 691.00 981.45 687.30 992.76 683.60C1004.07 679.90 1009.73 672.50 1021.04 672.50C1032.35 672.50 1038.01 693.96 1049.32 702.84C1060.63 711.72 1066.29 716.90 1077.60 716.90C1088.91 716.90 1094.57 707.58 1105.88 702.10C1117.19 696.62 1122.85 689.52 1134.16 689.52C1145.47 689.52 1151.13 689.67 1162.44 690.26C1173.75 690.85 1179.41 692.48 1190.72 692.48C1202.03 692.48 1207.69 690.26 1219.00 690.26C1230.31 690.26 1235.97 739.10 1247.28 739.10C1258.59 739.10 1264.25 702.10 1275.56 702.10C1286.87 702.10 1292.53 717.79 1303.84 725.04C1315.15 732.29 1320.81 732.14 1332.12 738.36C1343.43 744.58 1349.09 756.12 1360.40 756.12C1371.71 756.12 1377.37 735.40 1388.68 735.40C1399.99 735.40 1405.65 740.58 1416.96 740.58C1428.27 740.58 1433.93 736.14 1445.24 733.92C1456.55 731.70 1462.21 729.48 1473.52 729.48C1484.83 729.48 1490.49 733.92 1501.80 733.92C1513.11 733.92 1518.77 730.07 1530.08 728.00C1541.39 725.93 1558.36 723.56 1558.36 723.56" fill="none" stroke="#d93a58" stroke-opacity="0.7" stroke-width="1.3"/>
<path d="M370.60 865.00L370.60 702.10C370.60 702.10 387.57 696.92 398.88 696.18C410.19 695.44 415.85 696.18 427.16 695.44C438.47 694.70 444.13 688.04 455.44 688.04C466.75 688.04 472.41 691.00 483.72 691.00C495.03 691.00 500.69 691.00 512.00 691.00C523.31 691.00 528.97 665.84 540.28 665.84C551.59 665.84 557.25 670.28 568.56 670.28C579.87 670.28 585.53 670.28 596.84 670.28C608.15 670.28 613.81 670.28 625.12 670.28C636.43 670.28 642.09 681.38 653.40 681.38C664.71 681.38 670.37 666.58 681.68 666.58C692.99 666.58 698.65 687.30 709.96 687.30C721.27 687.30 726.93 687.30 738.24 687.30C749.55 687.30 755.21 687.30 766.52 687.30C777.83 687.30 783.49 687.30 794.80 687.30C806.11 687.30 811.77 691.00 823.08 691.00C834.39 691.00 840.05 672.50 851.36 672.50C862.67 672.50 868.33 679.90 879.64 679.90C890.95 679.90 896.61 679.90 907.92 679.90C919.23 679.90 924.89 681.38 936.20 683.60C947.51 685.82 953.17 691.00 964.48 691.00C975.79 691.00 981.45 688.48 992.76 683.60C1004.07 678.72 1009.73 666.58 1021.04 666.58C1032.35 666.58 1038.01 680.49 1049.32 689.52C1060.63 698.55 1066.29 711.72 1077.60 711.72C1088.91 711.72 1094.57 706.98 1105.88 703.58C1117.19 700.18 1122.85 694.70 1134.16 694.70C1145.47 694.70 1151.13 713.20 1162.44 713.20C1173.75 713.20 1179.41 705.36 1190.72 702.10C1202.03 698.84 1207.69 696.92 1219.00 696.92C1230.31 696.92 1235.97 737.62 1247.28 737.62C1258.59 737.62 1264.25 709.50 1275.56 709.50C1286.87 709.50 1292.53 746.50 1303.84 746.50C1315.15 746.50 1320.81 745.76 1332.12 745.76C1343.43 745.76 1349.09 766.48 1360.40 766.48C1371.71 766.48 1377.37 757.60 1388.68 757.60C1399.99 757.60 1405.65 766.48 1416.96 768.70C1428.27 770.92 1433.93 770.92 1445.24 770.92C1456.55 770.92 1462.21 762.04 1473.52 762.04C1484.83 762.04 1490.49 771.66 1501.80 775.36C1513.11 779.06 1518.77 780.54 1530.08 780.54C1541.39 780.54 1558.36 769.44 1558.36 769.44L1558.36 865.00 Z" fill="#f5b63f" fill-opacity="0.68"/>
<path d="M370.60 702.10C370.60 702.10 387.57 696.92 398.88 696.18C410.19 695.44 415.85 696.18 427.16 695.44C438.47 694.70 444.13 688.04 455.44 688.04C466.75 688.04 472.41 691.00 483.72 691.00C495.03 691.00 500.69 691.00 512.00 691.00C523.31 691.00 528.97 665.84 540.28 665.84C551.59 665.84 557.25 670.28 568.56 670.28C579.87 670.28 585.53 670.28 596.84 670.28C608.15 670.28 613.81 670.28 625.12 670.28C636.43 670.28 642.09 681.38 653.40 681.38C664.71 681.38 670.37 666.58 681.68 666.58C692.99 666.58 698.65 687.30 709.96 687.30C721.27 687.30 726.93 687.30 738.24 687.30C749.55 687.30 755.21 687.30 766.52 687.30C777.83 687.30 783.49 687.30 794.80 687.30C806.11 687.30 811.77 691.00 823.08 691.00C834.39 691.00 840.05 672.50 851.36 672.50C862.67 672.50 868.33 679.90 879.64 679.90C890.95 679.90 896.61 679.90 907.92 679.90C919.23 679.90 924.89 681.38 936.20 683.60C947.51 685.82 953.17 691.00 964.48 691.00C975.79 691.00 981.45 688.48 992.76 683.60C1004.07 678.72 1009.73 666.58 1021.04 666.58C1032.35 666.58 1038.01 680.49 1049.32 689.52C1060.63 698.55 1066.29 711.72 1077.60 711.72C1088.91 711.72 1094.57 706.98 1105.88 703.58C1117.19 700.18 1122.85 694.70 1134.16 694.70C1145.47 694.70 1151.13 713.20 1162.44 713.20C1173.75 713.20 1179.41 705.36 1190.72 702.10C1202.03 698.84 1207.69 696.92 1219.00 696.92C1230.31 696.92 1235.97 737.62 1247.28 737.62C1258.59 737.62 1264.25 709.50 1275.56 709.50C1286.87 709.50 1292.53 746.50 1303.84 746.50C1315.15 746.50 1320.81 745.76 1332.12 745.76C1343.43 745.76 1349.09 766.48 1360.40 766.48C1371.71 766.48 1377.37 757.60 1388.68 757.60C1399.99 757.60 1405.65 766.48 1416.96 768.70C1428.27 770.92 1433.93 770.92 1445.24 770.92C1456.55 770.92 1462.21 762.04 1473.52 762.04C1484.83 762.04 1490.49 771.66 1501.80 775.36C1513.11 779.06 1518.77 780.54 1530.08 780.54C1541.39 780.54 1558.36 769.44 1558.36 769.44" fill="none" stroke="#f5b63f" stroke-opacity="0.7" stroke-width="1.3"/>
<path d="M370.60 865.00L370.60 694.70C370.60 694.70 387.57 679.90 398.88 679.90C410.19 679.90 415.85 687.45 427.16 690.26C438.47 693.07 444.13 693.96 455.44 693.96C466.75 693.96 472.41 692.48 483.72 691.00C495.03 689.52 500.69 686.56 512.00 686.56C523.31 686.56 528.97 690.26 540.28 690.26C551.59 690.26 557.25 685.08 568.56 685.08C579.87 685.08 585.53 685.67 596.84 691.00C608.15 696.33 613.81 711.72 625.12 711.72C636.43 711.72 642.09 711.72 653.40 710.98C664.71 710.24 670.37 695.14 681.68 687.30C692.99 679.46 698.65 677.98 709.96 671.76C721.27 665.54 726.93 656.22 738.24 656.22C749.55 656.22 755.21 673.24 766.52 673.24C777.83 673.24 783.49 673.24 794.80 671.76C806.11 670.28 811.77 663.62 823.08 663.62C834.39 663.62 840.05 683.60 851.36 683.60C862.67 683.60 868.33 683.60 879.64 683.60C890.95 683.60 896.61 683.60 907.92 683.60C919.23 683.60 924.89 681.38 936.20 679.90C947.51 678.42 953.17 677.68 964.48 676.20C975.79 674.72 981.45 674.57 992.76 672.50C1004.07 670.43 1009.73 665.84 1021.04 665.84C1032.35 665.84 1038.01 726.52 1049.32 726.52C1060.63 726.52 1066.29 719.27 1077.60 714.68C1088.91 710.09 1094.57 706.84 1105.88 703.58C1117.19 700.32 1122.85 698.40 1134.16 698.40C1145.47 698.40 1151.13 721.34 1162.44 721.34C1173.75 721.34 1179.41 701.36 1190.72 701.36C1202.03 701.36 1207.69 701.36 1219.00 709.50C1230.31 717.64 1235.97 742.80 1247.28 742.80C1258.59 742.80 1264.25 713.20 1275.56 713.20C1286.87 713.20 1292.53 762.04 1303.84 762.04C1315.15 762.04 1320.81 747.24 1332.12 747.24C1343.43 747.24 1349.09 757.60 1360.40 757.60C1371.71 757.60 1377.37 757.60 1388.68 757.60C1399.99 757.60 1405.65 763.67 1416.96 765.74C1428.27 767.81 1433.93 765.74 1445.24 767.96C1456.55 770.18 1462.21 776.84 1473.52 776.84C1484.83 776.84 1490.49 774.62 1501.80 774.62C1513.11 774.62 1518.77 780.39 1530.08 782.76C1541.39 785.13 1558.36 786.46 1558.36 786.46L1558.36 865.00 Z" fill="#2a8fd9" fill-opacity="0.6"/>
<path d="M370.60 694.70C370.60 694.70 387.57 679.90 398.88 679.90C410.19 679.90 415.85 687.45 427.16 690.26C438.47 693.07 444.13 693.96 455.44 693.96C466.75 693.96 472.41 692.48 483.72 691.00C495.03 689.52 500.69 686.56 512.00 686.56C523.31 686.56 528.97 690.26 540.28 690.26C551.59 690.26 557.25 685.08 568.56 685.08C579.87 685.08 585.53 685.67 596.84 691.00C608.15 696.33 613.81 711.72 625.12 711.72C636.43 711.72 642.09 711.72 653.40 710.98C664.71 710.24 670.37 695.14 681.68 687.30C692.99 679.46 698.65 677.98 709.96 671.76C721.27 665.54 726.93 656.22 738.24 656.22C749.55 656.22 755.21 673.24 766.52 673.24C777.83 673.24 783.49 673.24 794.80 671.76C806.11 670.28 811.77 663.62 823.08 663.62C834.39 663.62 840.05 683.60 851.36 683.60C862.67 683.60 868.33 683.60 879.64 683.60C890.95 683.60 896.61 683.60 907.92 683.60C919.23 683.60 924.89 681.38 936.20 679.90C947.51 678.42 953.17 677.68 964.48 676.20C975.79 674.72 981.45 674.57 992.76 672.50C1004.07 670.43 1009.73 665.84 1021.04 665.84C1032.35 665.84 1038.01 726.52 1049.32 726.52C1060.63 726.52 1066.29 719.27 1077.60 714.68C1088.91 710.09 1094.57 706.84 1105.88 703.58C1117.19 700.32 1122.85 698.40 1134.16 698.40C1145.47 698.40 1151.13 721.34 1162.44 721.34C1173.75 721.34 1179.41 701.36 1190.72 701.36C1202.03 701.36 1207.69 701.36 1219.00 709.50C1230.31 717.64 1235.97 742.80 1247.28 742.80C1258.59 742.80 1264.25 713.20 1275.56 713.20C1286.87 713.20 1292.53 762.04 1303.84 762.04C1315.15 762.04 1320.81 747.24 1332.12 747.24C1343.43 747.24 1349.09 757.60 1360.40 757.60C1371.71 757.60 1377.37 757.60 1388.68 757.60C1399.99 757.60 1405.65 763.67 1416.96 765.74C1428.27 767.81 1433.93 765.74 1445.24 767.96C1456.55 770.18 1462.21 776.84 1473.52 776.84C1484.83 776.84 1490.49 774.62 1501.80 774.62C1513.11 774.62 1518.77 780.39 1530.08 782.76C1541.39 785.13 1558.36 786.46 1558.36 786.46" fill="none" stroke="#2a8fd9" stroke-opacity="0.7" stroke-width="1.3"/>
<path d="M370.60 865.00L370.60 705.80C370.60 705.80 387.57 705.80 398.88 705.80C410.19 705.80 415.85 703.14 427.16 699.88C438.47 696.62 444.13 694.26 455.44 689.52C466.75 684.78 472.41 676.20 483.72 676.20C495.03 676.20 500.69 698.40 512.00 698.40C523.31 698.40 528.97 698.40 540.28 698.40C551.59 698.40 557.25 698.40 568.56 698.40C579.87 698.40 585.53 702.10 596.84 702.10C608.15 702.10 613.81 695.59 625.12 688.78C636.43 681.97 642.09 668.06 653.40 668.06C664.71 668.06 670.37 686.56 681.68 686.56C692.99 686.56 698.65 684.34 709.96 684.34C721.27 684.34 726.93 687.30 738.24 687.30C749.55 687.30 755.21 678.42 766.52 678.42C777.83 678.42 783.49 683.60 794.80 683.60C806.11 683.60 811.77 683.60 823.08 682.12C834.39 680.64 840.05 665.84 851.36 665.84C862.67 665.84 868.33 671.76 879.64 673.24C890.95 674.72 896.61 673.24 907.92 674.72C919.23 676.20 924.89 681.23 936.20 683.60C947.51 685.97 953.17 686.56 964.48 686.56C975.79 686.56 981.45 686.56 992.76 683.60C1004.07 680.64 1009.73 665.10 1021.04 665.10C1032.35 665.10 1038.01 709.50 1049.32 713.20C1060.63 716.90 1066.29 716.90 1077.60 716.90C1088.91 716.90 1094.57 708.61 1105.88 703.58C1117.19 698.55 1122.85 691.74 1134.16 691.74C1145.47 691.74 1151.13 721.34 1162.44 721.34C1173.75 721.34 1179.41 702.84 1190.72 702.84C1202.03 702.84 1207.69 703.58 1219.00 706.54C1230.31 709.50 1235.97 717.64 1247.28 717.64C1258.59 717.64 1264.25 713.20 1275.56 713.20C1286.87 713.20 1292.53 747.98 1303.84 747.98C1315.15 747.98 1320.81 744.28 1332.12 744.28C1343.43 744.28 1349.09 767.96 1360.40 767.96C1371.71 767.96 1377.37 757.60 1388.68 757.60C1399.99 757.60 1405.65 765.74 1416.96 767.96C1428.27 770.18 1433.93 767.96 1445.24 770.18C1456.55 772.40 1462.21 780.54 1473.52 780.54C1484.83 780.54 1490.49 778.32 1501.80 778.32C1513.11 778.32 1518.77 800.52 1530.08 800.52C1541.39 800.52 1558.36 794.60 1558.36 794.60L1558.36 865.00 Z" fill="#5faa4f" fill-opacity="0.6"/>
<path d="M370.60 705.80C370.60 705.80 387.57 705.80 398.88 705.80C410.19 705.80 415.85 703.14 427.16 699.88C438.47 696.62 444.13 694.26 455.44 689.52C466.75 684.78 472.41 676.20 483.72 676.20C495.03 676.20 500.69 698.40 512.00 698.40C523.31 698.40 528.97 698.40 540.28 698.40C551.59 698.40 557.25 698.40 568.56 698.40C579.87 698.40 585.53 702.10 596.84 702.10C608.15 702.10 613.81 695.59 625.12 688.78C636.43 681.97 642.09 668.06 653.40 668.06C664.71 668.06 670.37 686.56 681.68 686.56C692.99 686.56 698.65 684.34 709.96 684.34C721.27 684.34 726.93 687.30 738.24 687.30C749.55 687.30 755.21 678.42 766.52 678.42C777.83 678.42 783.49 683.60 794.80 683.60C806.11 683.60 811.77 683.60 823.08 682.12C834.39 680.64 840.05 665.84 851.36 665.84C862.67 665.84 868.33 671.76 879.64 673.24C890.95 674.72 896.61 673.24 907.92 674.72C919.23 676.20 924.89 681.23 936.20 683.60C947.51 685.97 953.17 686.56 964.48 686.56C975.79 686.56 981.45 686.56 992.76 683.60C1004.07 680.64 1009.73 665.10 1021.04 665.10C1032.35 665.10 1038.01 709.50 1049.32 713.20C1060.63 716.90 1066.29 716.90 1077.60 716.90C1088.91 716.90 1094.57 708.61 1105.88 703.58C1117.19 698.55 1122.85 691.74 1134.16 691.74C1145.47 691.74 1151.13 721.34 1162.44 721.34C1173.75 721.34 1179.41 702.84 1190.72 702.84C1202.03 702.84 1207.69 703.58 1219.00 706.54C1230.31 709.50 1235.97 717.64 1247.28 717.64C1258.59 717.64 1264.25 713.20 1275.56 713.20C1286.87 713.20 1292.53 747.98 1303.84 747.98C1315.15 747.98 1320.81 744.28 1332.12 744.28C1343.43 744.28 1349.09 767.96 1360.40 767.96C1371.71 767.96 1377.37 757.60 1388.68 757.60C1399.99 757.60 1405.65 765.74 1416.96 767.96C1428.27 770.18 1433.93 767.96 1445.24 770.18C1456.55 772.40 1462.21 780.54 1473.52 780.54C1484.83 780.54 1490.49 778.32 1501.80 778.32C1513.11 778.32 1518.77 800.52 1530.08 800.52C1541.39 800.52 1558.36 794.60 1558.36 794.60" fill="none" stroke="#5faa4f" stroke-opacity="0.7" stroke-width="1.3"/>
<path d="M370.60 865.00L370.60 679.16C370.60 679.16 387.57 707.13 398.88 721.34C410.19 735.55 415.85 750.20 427.16 750.20C438.47 750.20 444.13 718.08 455.44 705.06C466.75 692.04 472.41 693.52 483.72 685.08C495.03 676.64 500.69 662.88 512.00 662.88C523.31 662.88 528.97 678.42 540.28 678.42C551.59 678.42 557.25 661.40 568.56 661.40C579.87 661.40 585.53 690.26 596.84 690.26C608.15 690.26 613.81 690.26 625.12 688.04C636.43 685.82 642.09 678.42 653.40 678.42C664.71 678.42 670.37 681.23 681.68 682.86C692.99 684.49 698.65 686.56 709.96 686.56C721.27 686.56 726.93 686.56 738.24 686.56C749.55 686.56 755.21 703.58 766.52 703.58C777.83 703.58 783.49 660.66 794.80 660.66C806.11 660.66 811.77 694.70 823.08 694.70C834.39 694.70 840.05 688.04 851.36 686.56C862.67 685.08 868.33 685.67 879.64 685.08C890.95 684.49 896.61 685.08 907.92 683.60C919.23 682.12 924.89 643.64 936.20 643.64C947.51 643.64 953.17 694.70 964.48 694.70C975.79 694.70 981.45 662.88 992.76 662.88C1004.07 662.88 1009.73 664.66 1021.04 673.24C1032.35 681.82 1038.01 697.51 1049.32 705.80C1060.63 714.09 1066.29 714.68 1077.60 714.68C1088.91 714.68 1094.57 679.90 1105.88 679.90C1117.19 679.90 1122.85 723.56 1134.16 723.56C1145.47 723.56 1151.13 682.86 1162.44 682.86C1173.75 682.86 1179.41 697.81 1190.72 703.58C1202.03 709.35 1207.69 703.58 1219.00 711.72C1230.31 719.86 1235.97 776.84 1247.28 776.84C1258.59 776.84 1264.25 691.74 1275.56 691.74C1286.87 691.74 1292.53 811.62 1303.84 811.62C1315.15 811.62 1320.81 748.72 1332.12 745.76C1343.43 742.80 1349.09 742.80 1360.40 742.80C1371.71 742.80 1377.37 750.35 1388.68 759.08C1399.99 767.81 1405.65 786.46 1416.96 786.46C1428.27 786.46 1433.93 780.54 1445.24 780.54C1456.55 780.54 1462.21 784.24 1473.52 784.24C1484.83 784.24 1490.49 780.54 1501.80 780.54C1513.11 780.54 1518.77 804.22 1530.08 804.22C1541.39 804.22 1558.36 798.30 1558.36 798.30L1558.36 865.00 Z" fill="#a05cd0" fill-opacity="0.6"/>
<path d="M370.60 679.16C370.60 679.16 387.57 707.13 398.88 721.34C410.19 735.55 415.85 750.20 427.16 750.20C438.47 750.20 444.13 718.08 455.44 705.06C466.75 692.04 472.41 693.52 483.72 685.08C495.03 676.64 500.69 662.88 512.00 662.88C523.31 662.88 528.97 678.42 540.28 678.42C551.59 678.42 557.25 661.40 568.56 661.40C579.87 661.40 585.53 690.26 596.84 690.26C608.15 690.26 613.81 690.26 625.12 688.04C636.43 685.82 642.09 678.42 653.40 678.42C664.71 678.42 670.37 681.23 681.68 682.86C692.99 684.49 698.65 686.56 709.96 686.56C721.27 686.56 726.93 686.56 738.24 686.56C749.55 686.56 755.21 703.58 766.52 703.58C777.83 703.58 783.49 660.66 794.80 660.66C806.11 660.66 811.77 694.70 823.08 694.70C834.39 694.70 840.05 688.04 851.36 686.56C862.67 685.08 868.33 685.67 879.64 685.08C890.95 684.49 896.61 685.08 907.92 683.60C919.23 682.12 924.89 643.64 936.20 643.64C947.51 643.64 953.17 694.70 964.48 694.70C975.79 694.70 981.45 662.88 992.76 662.88C1004.07 662.88 1009.73 664.66 1021.04 673.24C1032.35 681.82 1038.01 697.51 1049.32 705.80C1060.63 714.09 1066.29 714.68 1077.60 714.68C1088.91 714.68 1094.57 679.90 1105.88 679.90C1117.19 679.90 1122.85 723.56 1134.16 723.56C1145.47 723.56 1151.13 682.86 1162.44 682.86C1173.75 682.86 1179.41 697.81 1190.72 703.58C1202.03 709.35 1207.69 703.58 1219.00 711.72C1230.31 719.86 1235.97 776.84 1247.28 776.84C1258.59 776.84 1264.25 691.74 1275.56 691.74C1286.87 691.74 1292.53 811.62 1303.84 811.62C1315.15 811.62 1320.81 748.72 1332.12 745.76C1343.43 742.80 1349.09 742.80 1360.40 742.80C1371.71 742.80 1377.37 750.35 1388.68 759.08C1399.99 767.81 1405.65 786.46 1416.96 786.46C1428.27 786.46 1433.93 780.54 1445.24 780.54C1456.55 780.54 1462.21 784.24 1473.52 784.24C1484.83 784.24 1490.49 780.54 1501.80 780.54C1513.11 780.54 1518.77 804.22 1530.08 804.22C1541.39 804.22 1558.36 798.30 1558.36 798.30" fill="none" stroke="#a05cd0" stroke-opacity="0.7" stroke-width="1.3"/>
</g></svg>
<div style="left:1579.4px;top:161.03px;font-size:12.28px;line-height:14.73px;color:#4c4c4c;font-weight:normal;white-space:nowrap;transform:scaleY(1.14);transform-origin:50% 50%;">Education</div>
<div style="left:1597.2px;top:188.4px;width:8.2px;height:8.2px;background:#2f8fd8;"></div>
<div style="left:1608.8px;top:186.35px;font-size:11.42px;line-height:13.71px;color:#5c5c5c;font-weight:normal;white-space:nowrap;transform:scaleY(1.14);transform-origin:50% 50%;">Bachelors</div>
<div style="left:1597.2px;top:204.4px;width:8.2px;height:8.2px;background:#d63a5a;"></div>
<div style="left:1608.8px;top:202.32px;font-size:11.47px;line-height:13.76px;color:#5c5c5c;font-weight:normal;white-space:nowrap;transform:scaleY(1.14);transform-origin:50% 50%;">Graduate Degr...</div>
<div style="left:1597.2px;top:220.4px;width:8.2px;height:8.2px;background:#f7b236;"></div>
<div style="left:1608.8px;top:218.23px;font-size:11.61px;line-height:13.93px;color:#5c5c5c;font-weight:normal;white-space:nowrap;transform:scaleY(1.14);transform-origin:50% 50%;">High School</div>
<div style="left:1597.2px;top:236.4px;width:8.2px;height:8.2px;background:#62a84c;"></div>
<div style="left:1608.8px;top:234.26px;font-size:11.56px;line-height:13.88px;color:#5c5c5c;font-weight:normal;white-space:nowrap;transform:scaleY(1.14);transform-origin:50% 50%;">Partial College</div>
<div style="left:1597.2px;top:252.4px;width:8.2px;height:8.2px;background:#a35fd3;"></div>
<div style="left:1608.8px;top:250.44px;font-size:11.27px;line-height:13.52px;color:#5c5c5c;font-weight:normal;white-space:nowrap;transform:scaleY(1.14);transform-origin:50% 50%;">Partial High Sch...</div>
<div style="left:1739.4px;top:103.97px;font-size:11.38px;line-height:13.65px;color:#e4e4e4;font-weight:bold;white-space:nowrap;transform:scaleY(1.14);transform-origin:50% 50%;">Drop Zones</div>
<svg style="left:1900.8px;top:103.2px;" width="8.00" height="12.00" viewBox="0 0 4 6"><path d="M0.8 0.5 L3.2 3 L0.8 5.5" fill="none" stroke="#c8c8c8" stroke-width="0.8"/></svg>
<div style="left:1742.6px;top:137px;width:165.4px;height:87.6px;background:#515151;border:2px solid #2d2d2d;"></div>
<div style="left:1744.6px;top:139px;width:22.6px;height:25.6px;background:#4b4b4b;border-right:2px solid #2d2d2d;"></div>
<div style="left:1744.6px;top:162.6px;width:161.4px;height:60px;background:#515151;"></div>
<div style="left:1795.2px;top:144.07px;font-size:11.22px;line-height:13.47px;color:#f0f0f0;font-weight:bold;white-space:nowrap;transform:scaleY(1.14);transform-origin:50% 50%;">Categories</div>
<svg style="left:1771.2px;top:143.8px;" width="14.00" height="14.00" viewBox="0 0 7 7"><path d="M0.8 6.2 V3 L3.4 0.8 L6 3 V6.2Z" fill="none" stroke="#5f8fae" stroke-width="0.8"/></svg>
<div style="left:1750px;top:165.2px;width:149.6px;height:23px;background:#1f72b4;border-radius:4.4px;"></div>
<svg style="left:1757.2px;top:171.5px;" width="7.20" height="10.40" viewBox="0 0 3.6 5.2"><rect x="0.2" y="0" width="1.3" height="1.3" fill="#fff"/><rect x="2.1" y="0" width="1.3" height="1.3" fill="#fff"/><rect x="0.2" y="1.95" width="1.3" height="1.3" fill="#fff"/><rect x="2.1" y="1.95" width="1.3" height="1.3" fill="#fff"/><rect x="0.2" y="3.9" width="1.3" height="1.3" fill="#fff"/><rect x="2.1" y="3.9" width="1.3" height="1.3" fill="#fff"/></svg>
<div style="left:1770px;top:170.14px;font-size:11.6px;line-height:13.92px;color:#fff;font-weight:normal;white-space:nowrap;transform:scaleY(1.14);transform-origin:50% 50%;">dateKey year mon...</div>
<svg style="left:1882.8px;top:172.3px;" width="9.20" height="9.20" viewBox="0 0 4.6 4.6"><path d="M0.4 0.4 L4.2 4.2 M4.2 0.4 L0.4 4.2" stroke="#fff" stroke-width="0.8"/></svg>
<div style="left:1742.6px;top:228.8px;width:165.4px;height:103.8px;background:#515151;border:2px solid #2d2d2d;"></div>
<div style="left:1744.6px;top:230.8px;width:22.6px;height:25.6px;background:#4b4b4b;border-right:2px solid #2d2d2d;"></div>
<div style="left:1744.6px;top:254.4px;width:161.4px;height:76.2px;background:#515151;"></div>
<div style="left:1795.2px;top:236.07px;font-size:10.89px;line-height:13.06px;color:#f0f0f0;font-weight:bold;white-space:nowrap;transform:scaleY(1.14);transform-origin:50% 50%;">Values</div>
<svg style="left:1771.2px;top:235.6px;" width="14.00" height="14.00" viewBox="0 0 7 7"><rect x="0.6" y="3.6" width="1.3" height="2.8" fill="#a07850"/><rect x="2.6" y="2.2" width="1.3" height="4.2" fill="#a07850"/><rect x="4.6" y="0.8" width="1.3" height="5.6" fill="#a07850"/></svg>
<div style="left:1750px;top:258px;width:149.6px;height:23.2px;background:#f18d33;border-radius:4.4px;"></div>
<svg style="left:1755.2px;top:264.4px;" width="10.80" height="10.40" viewBox="0 0 5.4 5.2"><rect x="0.2" y="2.6" width="1.2" height="2.6" fill="#fff"/><rect x="2" y="1.4" width="1.2" height="3.8" fill="#fff"/><rect x="3.8" y="0" width="1.2" height="5.2" fill="#fff"/></svg>
<div style="left:1770px;top:263.72px;font-size:10.47px;line-height:12.57px;color:#fff;font-weight:normal;white-space:nowrap;transform:scaleY(1.14);transform-origin:50% 50%;">Sales</div>
<svg style="left:1882.8px;top:265.2px;" width="9.20" height="9.20" viewBox="0 0 4.6 4.6"><path d="M0.4 0.4 L4.2 4.2 M4.2 0.4 L0.4 4.2" stroke="#fff" stroke-width="0.8"/></svg>
<div style="left:1750px;top:287.4px;width:149.6px;height:23px;background:#f18d33;border-radius:4.4px;"></div>
<svg style="left:1755.2px;top:293.7px;" width="10.80" height="10.40" viewBox="0 0 5.4 5.2"><rect x="0.2" y="2.6" width="1.2" height="2.6" fill="#fff"/><rect x="2" y="1.4" width="1.2" height="3.8" fill="#fff"/><rect x="3.8" y="0" width="1.2" height="5.2" fill="#fff"/></svg>
<div style="left:1770px;top:292px;font-size:12.17px;line-height:14.6px;color:#fff;font-weight:normal;white-space:nowrap;transform:scaleY(1.14);transform-origin:50% 50%;">net margin</div>
<svg style="left:1882.8px;top:294.5px;" width="9.20" height="9.20" viewBox="0 0 4.6 4.6"><path d="M0.4 0.4 L4.2 4.2 M4.2 0.4 L0.4 4.2" stroke="#fff" stroke-width="0.8"/></svg>
<div style="left:1742.6px;top:337.4px;width:165.4px;height:88.2px;background:#515151;border:2px solid #2d2d2d;"></div>
<div style="left:1744.6px;top:339.4px;width:22.6px;height:25.6px;background:#4b4b4b;border-right:2px solid #2d2d2d;"></div>
<div style="left:1744.6px;top:363px;width:161.4px;height:60.6px;background:#515151;"></div>
<div style="left:1795.2px;top:344.51px;font-size:11.15px;line-height:13.38px;color:#f0f0f0;font-weight:bold;white-space:nowrap;transform:scaleY(1.14);transform-origin:50% 50%;">Trellis Vertical</div>
<svg style="left:1771.2px;top:344.2px;" width="14.00" height="14.00" viewBox="0 0 7 7"><path d="M2 0.6 V6 M0.6 4.6 L2 6.2 L3.4 4.6 M5 0.6 V6 M3.6 4.6 L5 6.2 L6.4 4.6" fill="none" stroke="#5f9a86" stroke-width="0.8"/></svg>
<div style="left:1750px;top:366.2px;width:149.6px;height:23.2px;background:#f18d33;border-radius:4.4px;"></div>
<svg style="left:1755.2px;top:372.6px;" width="10.80" height="10.40" viewBox="0 0 5.4 5.2"><rect x="0.2" y="2.6" width="1.2" height="2.6" fill="#fff"/><rect x="2" y="1.4" width="1.2" height="3.8" fill="#fff"/><rect x="3.8" y="0" width="1.2" height="5.2" fill="#fff"/></svg>
<div style="left:1770px;top:371.56px;font-size:11.06px;line-height:13.27px;color:#fff;font-weight:normal;white-space:nowrap;transform:scaleY(1.14);transform-origin:50% 50%;">Values</div>
<svg style="left:1882.8px;top:373.4px;" width="9.20" height="9.20" viewBox="0 0 4.6 4.6"><path d="M0.4 0.4 L4.2 4.2 M4.2 0.4 L0.4 4.2" stroke="#fff" stroke-width="0.8"/></svg>
<div style="left:1742.6px;top:431.2px;width:165.4px;height:25.2px;background:#515151;border:2px solid #2d2d2d;"></div>
<div style="left:1744.6px;top:433.2px;width:22.6px;height:21.2px;background:#4b4b4b;border-right:2px solid #2d2d2d;"></div>
<div style="left:1795.2px;top:438.21px;font-size:11.32px;line-height:13.58px;color:#757575;font-weight:bold;white-space:nowrap;transform:scaleY(1.14);transform-origin:50% 50%;">Trellis Horizontal</div>
<svg style="left:1771.2px;top:438px;" width="14.00" height="14.00" viewBox="0 0 7 7"><path d="M0.6 1.6 H6.2 M0.6 3.6 H6.2 M0.6 5.6 H6.2 M2 0.4 V2.8 M2 4.4 V6.8" fill="none" stroke="#4f7d6e" stroke-width="0.8"/></svg>
<div style="left:1742.6px;top:462px;width:165.4px;height:25.6px;background:#515151;border:2px solid #2d2d2d;"></div>
<div style="left:1744.6px;top:464px;width:22.6px;height:21.6px;background:#4b4b4b;border-right:2px solid #2d2d2d;"></div>
<div style="left:1795.2px;top:469.3px;font-size:10.83px;line-height:13px;color:#757575;font-weight:bold;white-space:nowrap;transform:scaleY(1.14);transform-origin:50% 50%;">Filters</div>
<svg style="left:1771.2px;top:468.8px;" width="14.00" height="14.00" viewBox="0 0 7 7"><path d="M0.6 0.8 H6.2 L4 3.4 V6.4 H2.8 V3.4Z" fill="none" stroke="#8f5a8f" stroke-width="0.8"/></svg>
<svg style="left:1747.2px;top:468.6px;" width="14.00" height="14.00" viewBox="0 0 7 7"><path d="M0.6 6.4 V0.6 H6.4" fill="none" stroke="#9a9a9a" stroke-width="0.7"/><path d="M5.6 5.6 L2.4 2.4 M2.4 4.6 V2.4 H4.6" fill="none" stroke="#9a9a9a" stroke-width="0.7"/></svg>
<div style="left:1742.6px;top:493px;width:165.4px;height:87.4px;background:#515151;border:2px solid #2d2d2d;"></div>
<div style="left:1744.6px;top:495px;width:22.6px;height:25.6px;background:#4b4b4b;border-right:2px solid #2d2d2d;"></div>
<div style="left:1744.6px;top:518.6px;width:161.4px;height:59.8px;background:#515151;"></div>
<div style="left:1795.2px;top:499.91px;font-size:11.49px;line-height:13.79px;color:#f0f0f0;font-weight:bold;white-space:nowrap;transform:scaleY(1.14);transform-origin:50% 50%;">Color</div>
<svg style="left:1771.2px;top:499.8px;" width="14.00" height="14.00" viewBox="0 0 7 7"><circle cx="3.4" cy="1.4" r="0.9" fill="#d0a040"/><circle cx="1.4" cy="3.4" r="0.9" fill="#c06060"/><circle cx="5.4" cy="3.4" r="0.9" fill="#7070c0"/><circle cx="2.2" cy="5.6" r="0.9" fill="#60a060"/><circle cx="4.8" cy="5.6" r="0.9" fill="#c08040"/></svg>
<svg style="left:1747.2px;top:499.6px;" width="14.00" height="14.00" viewBox="0 0 7 7"><path d="M0.6 6.4 V0.6 H6.4" fill="none" stroke="#9a9a9a" stroke-width="0.7"/><path d="M5.6 5.6 L2.4 2.4 M2.4 4.6 V2.4 H4.6" fill="none" stroke="#9a9a9a" stroke-width="0.7"/></svg>
<div style="left:1750px;top:521.6px;width:149.6px;height:22.6px;background:#1f72b4;border-radius:4.4px;"></div>
<svg style="left:1757.2px;top:527.7px;" width="7.20" height="10.40" viewBox="0 0 3.6 5.2"><rect x="0.2" y="0" width="1.3" height="1.3" fill="#fff"/><rect x="2.1" y="0" width="1.3" height="1.3" fill="#fff"/><rect x="0.2" y="1.95" width="1.3" height="1.3" fill="#fff"/><rect x="2.1" y="1.95" width="1.3" height="1.3" fill="#fff"/><rect x="0.2" y="3.9" width="1.3" height="1.3" fill="#fff"/><rect x="2.1" y="3.9" width="1.3" height="1.3" fill="#fff"/></svg>
<div style="left:1770px;top:526.26px;font-size:11.74px;line-height:14.08px;color:#fff;font-weight:normal;white-space:nowrap;transform:scaleY(1.14);transform-origin:50% 50%;">Education</div>
<svg style="left:1882.8px;top:528.5px;" width="9.20" height="9.20" viewBox="0 0 4.6 4.6"><path d="M0.4 0.4 L4.2 4.2 M4.2 0.4 L0.4 4.2" stroke="#fff" stroke-width="0.8"/></svg>
<div style="left:1742.6px;top:585.4px;width:165.4px;height:26.2px;background:#515151;border:2px solid #2d2d2d;"></div>
<div style="left:1744.6px;top:587.4px;width:22.6px;height:22.2px;background:#4b4b4b;border-right:2px solid #2d2d2d;"></div>
<div style="left:1795.2px;top:592.8px;font-size:10.67px;line-height:12.8px;color:#757575;font-weight:bold;white-space:nowrap;transform:scaleY(1.14);transform-origin:50% 50%;">Labels</div>
<svg style="left:1771.2px;top:592.2px;" width="14.00" height="14.00" viewBox="0 0 7 7"><path d="M3 0.8 H6 V3.8 L3 6.6 L0.6 4 Z" fill="none" stroke="#8c4a50" stroke-width="0.8"/></svg>
<div style="left:1742.6px;top:617.2px;width:165.4px;height:25.8px;background:#515151;border:2px solid #2d2d2d;"></div>
<div style="left:1744.6px;top:619.2px;width:22.6px;height:21.8px;background:#4b4b4b;border-right:2px solid #2d2d2d;"></div>
<div style="left:1795.2px;top:624.08px;font-size:11.54px;line-height:13.85px;color:#757575;font-weight:bold;white-space:nowrap;transform:scaleY(1.14);transform-origin:50% 50%;">Tooltip</div>
<svg style="left:1771.2px;top:624px;" width="14.00" height="14.00" viewBox="0 0 7 7"><path d="M0.6 0.8 H6.2 V4.6 H4 L3 6.2 V4.6 H0.6Z" fill="none" stroke="#9a4a4a" stroke-width="0.8"/></svg>
<div style="left:988.6px;top:75.6px;width:249.8px;height:319px;background:#333333;box-shadow:0 1.6px 5px rgba(0,0,0,0.45);"></div>
<div style="left:988.6px;top:75.6px;width:249.8px;height:27.8px;background:#262626;"></div>
<div style="left:1019.8px;top:83.88px;font-size:12.19px;line-height:14.63px;color:#f2f2f2;font-weight:normal;white-space:nowrap;transform:scaleY(1.14);transform-origin:50% 50%;">Holt Winters</div>
<div style="left:1019.8px;top:111.89px;font-size:11.85px;line-height:14.21px;color:#f2f2f2;font-weight:normal;white-space:nowrap;transform:scaleY(1.14);transform-origin:50% 50%;">Holt Winters No Season</div>
<div style="left:1019.8px;top:139.75px;font-size:12.08px;line-height:14.49px;color:#f2f2f2;font-weight:normal;white-space:nowrap;transform:scaleY(1.14);transform-origin:50% 50%;">Holt Winters No Trend</div>
<div style="left:1019.8px;top:180.34px;font-size:12.1px;line-height:14.52px;color:#f2f2f2;font-weight:normal;white-space:nowrap;transform:scaleY(1.14);transform-origin:50% 50%;">Arima</div>
<div style="left:1019.8px;top:222.11px;font-size:11.82px;line-height:14.19px;color:#f2f2f2;font-weight:normal;white-space:nowrap;transform:scaleY(1.14);transform-origin:50% 50%;">First Order Autoregressive</div>
<div style="left:1019.8px;top:249.85px;font-size:11.91px;line-height:14.29px;color:#f2f2f2;font-weight:normal;white-space:nowrap;transform:scaleY(1.14);transform-origin:50% 50%;">Difference First Order Autoregressive</div>
<div style="left:1019.8px;top:277.49px;font-size:11.85px;line-height:14.22px;color:#f2f2f2;font-weight:normal;white-space:nowrap;transform:scaleY(1.14);transform-origin:50% 50%;">Random Walk</div>
<div style="left:1019.8px;top:305.64px;font-size:11.94px;line-height:14.33px;color:#f2f2f2;font-weight:normal;white-space:nowrap;transform:scaleY(1.14);transform-origin:50% 50%;">Simple Exponential Smoothing</div>
<div style="left:1019.8px;top:333.77px;font-size:11.39px;line-height:13.66px;color:#f2f2f2;font-weight:normal;white-space:nowrap;transform:scaleY(1.14);transform-origin:50% 50%;">Best Fit</div>
<div style="left:1019.8px;top:373.93px;font-size:11.45px;line-height:13.75px;color:#f2f2f2;font-weight:normal;white-space:nowrap;transform:scaleY(1.14);transform-origin:50% 50%;">Remove Forecast</div>
<div style="left:1018px;top:165.5px;width:220.4px;height:1.4px;background:#474747;"></div>
<div style="left:1018px;top:205.5px;width:220.4px;height:1.4px;background:#474747;"></div>
<div style="left:1018px;top:360.3px;width:220.4px;height:1.4px;background:#474747;"></div>
<svg style="left:995.6px;top:372.8px;" width="14.80" height="15.60" viewBox="0 0 7.4 7.8"><path d="M0.5 0.5 L6.9 7.3 M6.9 0.5 L0.5 7.3" stroke="#e43518" stroke-width="1.1"/></svg>
<div style="left:0px;top:932px;width:1920px;height:3.8px;background:#2b2b2b;"></div>
<div style="left:0px;top:935.8px;width:111.8px;height:33.8px;background:#2a2a2a;border:3px solid #42ad22;border-top:none;border-radius:0 0 5px 5px;"></div>
<div style="left:108.8px;top:936px;width:1812px;height:24px;border-top:3.8px solid #42ad22;border-left:3px solid #42ad22;border-top-left-radius:6px;"></div>
<div style="left:10.4px;top:947.08px;font-size:12.21px;line-height:14.65px;color:#fff;font-weight:bold;white-space:nowrap;transform:scaleY(1.14);transform-origin:50% 50%;">area forecast</div>
<svg style="left:95.2px;top:952px;" width="8.00" height="6.00" viewBox="0 0 4 3"><path d="M0 0 H4 L2 2.8Z" fill="#fff"/></svg>
<svg style="left:126.4px;top:948.8px;" width="12.00" height="12.00" viewBox="0 0 6 6"><path d="M3 0.2 V5.8 M0.2 3 H5.8" stroke="#c8c8c8" stroke-width="1"/></svg>
<svg style="left:1811.2px;top:948px;" width="16.00" height="16.00" viewBox="0 0 8 8"><circle cx="4" cy="4" r="3.3" fill="none" stroke="#d0d0d0" stroke-width="0.8"/><path d="M4 5.6 A1.6 1.6 0 1 1 5.6 4 C5.6 5.4 4.8 6.2 3.6 6.6" fill="none" stroke="#d0d0d0" stroke-width="0.8"/></svg>
<svg style="left:1839.2px;top:948px;" width="18.00" height="18.00" viewBox="0 0 9 9"><circle cx="3.6" cy="3.6" r="3" fill="none" stroke="#d8d8d8" stroke-width="0.9"/><path d="M5.8 5.8 L8 7.8" stroke="#d8d8d8" stroke-width="1"/></svg>
<svg style="left:1866px;top:947.6px;" width="18.00" height="18.00" viewBox="0 0 9 9"><path d="M1 4.4 L4.4 1 L7.8 4.4 V7.8 H1Z" fill="none" stroke="#e0e0e0" stroke-width="0.9"/><path d="M3.6 7.8 V5.8 H5.2 V7.8" fill="none" stroke="#e0e0e0" stroke-width="0.7"/></svg>
<div style="left:1896.4px;top:950px;width:14px;height:12.4px;background:#8a8a8a;"></div>
</div></body></html>
